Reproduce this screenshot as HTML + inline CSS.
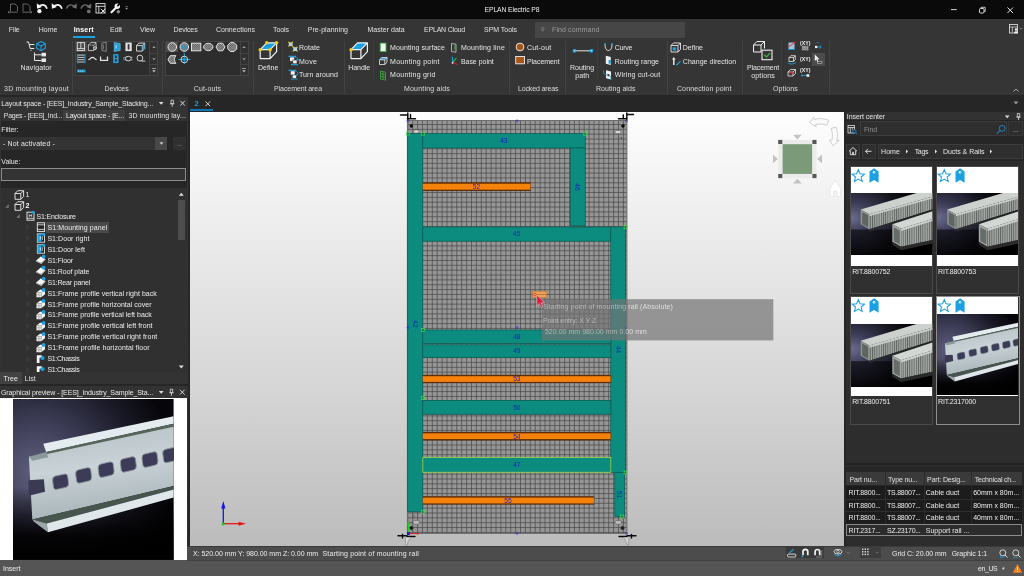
<!DOCTYPE html>
<html><head><meta charset="utf-8"><title>EPLAN Electric P8</title>
<style>
html,body{margin:0;padding:0;background:#262626;overflow:hidden;}
body{width:1024px;height:576px;position:relative;overflow:hidden;font-family:"Liberation Sans",sans-serif;}
.t{position:absolute;white-space:pre;line-height:10px;height:10px;}
.r{position:absolute;box-sizing:border-box;}
svg{overflow:visible;}
</style></head><body><div id="app" style="position:absolute;left:0;top:0;width:1024px;height:576px;overflow:hidden;will-change:transform;">
<div class="r" style="left:0.00px;top:0.00px;width:1024.00px;height:19.00px;background:#0a0a0a;"></div>
<div class="t" style="left:484.62px;top:4.94px;font-size:6.80px;color:#f0f0f0;letter-spacing:-0.114px;">EPLAN Electric P8</div>
<svg class="r" style="left:948.00px;top:4.00px;" width="70" height="12" viewBox="0 0 70 12"><path d="M3 5.600h5.800" stroke="#e8e8e8" stroke-width="0.900" fill="none"/><rect x="31.5" y="4.5" width="4.5" height="4.5" rx="1" fill="none" stroke="#e8e8e8" stroke-width="0.9"/><path d="M33 4.3v-1h4.2v4.2h-1" fill="none" stroke="#e8e8e8" stroke-width="0.8"/><path d="M59.5 3.5l5.5 5.5M65 3.5l-5.5 5.5" stroke="#e8e8e8" stroke-width="1" fill="none"/></svg>
<svg class="r" style="left:0.00px;top:0.00px;" width="135" height="19" viewBox="0 0 135 19"><g fill="none" stroke="#707070" stroke-width="0.900"><path d="M10.500 11.500v-7.500h4.500l2.500 2.500v5"/><path d="M8 12.200h9.500M9.300 11l-1.300 1.200 1.300 1.200"/></g><g fill="none" stroke="#707070" stroke-width="0.900"><path d="M23 11.500v-7.500h4.500l2.500 2.500v5"/><path d="M22.500 12.200h9.500M30.700 11l1.300 1.200-1.300 1.200"/></g><path d="M38.4 7.600c2.300-4 7.300-3.600 8.600 1.200" fill="none" stroke="#f4f4f4" stroke-width="1.600"/><path d="M36.8 3.300l0.200 5.400 5-1.700z" fill="#f4f4f4"/><circle cx="39.4" cy="11.200" r="2.100" fill="#f4f4f4"/><path d="M53.3 7.600c2.300-4 7.300-3.600 8.600 1.200" fill="none" stroke="#f4f4f4" stroke-width="1.600"/><path d="M51.7 3.300l0.200 5.400 5-1.700z" fill="#f4f4f4"/><path d="M66.5 8.600c1.300-4.600 6.300-5 8.600-1" fill="none" stroke="#6e6e6e" stroke-width="1.400"/><path d="M76.8 3.500l-0.200 5.200-4.800-1.700z" fill="#6e6e6e"/><path d="M81 8.600c1.300-4.600 6.300-5 8.600-1" fill="none" stroke="#6e6e6e" stroke-width="1.400"/><path d="M91.3 3.500l-0.200 5.200-4.800-1.700z" fill="#6e6e6e"/><circle cx="88.8" cy="11.400" r="1.900" fill="#6e6e6e"/><g fill="none" stroke="#e0e0e0" stroke-width="0.900"><rect x="96" y="3.600" width="9" height="9.400"/><path d="M96 6.300h9M98.800 6.300v6.700"/><path d="M100.800 8.800l4.400 4.400M105.200 8.800l-4.400 4.400" stroke-width="1"/></g><path d="M111.500 12.300l5-5" stroke="#f4f4f4" stroke-width="2.100" fill="none" stroke-linecap="round"/><circle cx="117.300" cy="6.200" r="2.700" fill="#f4f4f4"/><path d="M117.300 6.200l3.500-3.500" stroke="#0a0a0a" stroke-width="1.800"/><circle cx="118.300" cy="11.800" r="1.700" fill="#8a8a8a"/><path d="M125.300 8h2.600l-1.300 1.800z" fill="#a0a0a0"/><path d="M125.300 6.700h2.600" stroke="#a0a0a0" stroke-width="0.700"/></svg>
<div class="r" style="left:0.00px;top:19.00px;width:1024.00px;height:76.30px;background:#353535;"></div>
<div class="t" style="left:8.75px;top:24.87px;font-size:7.00px;color:#e0e0e0;letter-spacing:-0.095px;">File</div>
<div class="t" style="left:38.75px;top:24.87px;font-size:7.00px;color:#e0e0e0;letter-spacing:0.020px;">Home</div>
<div class="t" style="left:110.00px;top:24.87px;font-size:7.00px;color:#e0e0e0;letter-spacing:-0.040px;">Edit</div>
<div class="t" style="left:140.00px;top:24.87px;font-size:7.00px;color:#e0e0e0;letter-spacing:-0.011px;">View</div>
<div class="t" style="left:173.50px;top:24.87px;font-size:7.00px;color:#e0e0e0;letter-spacing:-0.128px;">Devices</div>
<div class="t" style="left:216.00px;top:24.87px;font-size:7.00px;color:#e0e0e0;letter-spacing:0.008px;">Connections</div>
<div class="t" style="left:273.00px;top:24.87px;font-size:7.00px;color:#e0e0e0;letter-spacing:-0.068px;">Tools</div>
<div class="t" style="left:307.75px;top:24.87px;font-size:7.00px;color:#e0e0e0;letter-spacing:0.047px;">Pre-planning</div>
<div class="t" style="left:367.50px;top:24.87px;font-size:7.00px;color:#e0e0e0;letter-spacing:0.026px;">Master data</div>
<div class="t" style="left:424.00px;top:24.87px;font-size:7.00px;color:#e0e0e0;letter-spacing:-0.199px;">EPLAN Cloud</div>
<div class="t" style="left:484.00px;top:24.87px;font-size:7.00px;color:#e0e0e0;letter-spacing:-0.036px;">SPM Tools</div>
<div class="t" style="left:73.75px;top:24.87px;font-size:7.00px;color:#ffffff;letter-spacing:0.157px;font-weight:bold;">Insert</div>
<div class="r" style="left:73.00px;top:36.20px;width:21.50px;height:1.60px;background:#1ba1e2;"></div>
<div class="r" style="left:534.50px;top:21.50px;width:150.00px;height:16.00px;background:#464646;"></div>
<div class="t" style="left:552.00px;top:24.87px;font-size:7.00px;color:#9a9a9a;letter-spacing:0.101px;">Find command</div>
<svg class="r" style="left:539.00px;top:25.00px;" width="9" height="9" viewBox="0 0 9 9"><circle cx="3.800" cy="3.800" r="1.300" fill="none" stroke="#8a8a8a" stroke-width="0.700"/><path d="M3.800 5.100v1.600" stroke="#8a8a8a" stroke-width="0.800"/></svg>
<svg class="r" style="left:1007.80px;top:22.60px;" width="16" height="12" viewBox="0 0 16 12"><rect x="1.500" y="1.500" width="8" height="8.500" fill="none" stroke="#d8d8d8" stroke-width="0.900"/><path d="M1.500 4h8M4.300 4v5.500" stroke="#d8d8d8" stroke-width="0.800"/><circle cx="8" cy="6.500" r="1.200" fill="#f0f0f0"/><path d="M6 10.200c0-2.600 4-2.600 4 0z" fill="#f0f0f0"/><path d="M11.800 5l1.200 1.200 1.200-1.200" fill="none" stroke="#aaa" stroke-width="0.700"/></svg>
<div class="r" style="left:72.00px;top:41.00px;width:1.00px;height:53.00px;background:#424242;"></div>
<div class="r" style="left:161.50px;top:41.00px;width:1.00px;height:53.00px;background:#424242;"></div>
<div class="r" style="left:253.00px;top:41.00px;width:1.00px;height:53.00px;background:#424242;"></div>
<div class="r" style="left:343.50px;top:41.00px;width:1.00px;height:53.00px;background:#424242;"></div>
<div class="r" style="left:508.50px;top:41.00px;width:1.00px;height:53.00px;background:#424242;"></div>
<div class="r" style="left:565.00px;top:41.00px;width:1.00px;height:53.00px;background:#424242;"></div>
<div class="r" style="left:667.00px;top:41.00px;width:1.00px;height:53.00px;background:#424242;"></div>
<div class="r" style="left:742.00px;top:41.00px;width:1.00px;height:53.00px;background:#424242;"></div>
<div class="r" style="left:828.50px;top:41.00px;width:1.00px;height:53.00px;background:#424242;"></div>
<div class="t" style="left:4.00px;top:83.87px;font-size:7.00px;color:#dcdcdc;letter-spacing:0.261px;">3D mounting layout</div>
<div class="t" style="left:104.50px;top:83.87px;font-size:7.00px;color:#dcdcdc;letter-spacing:-0.128px;">Devices</div>
<div class="t" style="left:193.75px;top:83.87px;font-size:7.00px;color:#dcdcdc;letter-spacing:0.131px;">Cut-outs</div>
<div class="t" style="left:274.00px;top:83.87px;font-size:7.00px;color:#dcdcdc;letter-spacing:-0.073px;">Placement area</div>
<div class="t" style="left:404.00px;top:83.87px;font-size:7.00px;color:#dcdcdc;letter-spacing:0.186px;">Mounting aids</div>
<div class="t" style="left:517.95px;top:83.87px;font-size:7.00px;color:#dcdcdc;letter-spacing:-0.127px;">Locked areas</div>
<div class="t" style="left:595.95px;top:83.87px;font-size:7.00px;color:#dcdcdc;letter-spacing:0.049px;">Routing aids</div>
<div class="t" style="left:676.95px;top:83.87px;font-size:7.00px;color:#dcdcdc;letter-spacing:0.123px;">Connection point</div>
<div class="t" style="left:773.00px;top:83.87px;font-size:7.00px;color:#dcdcdc;letter-spacing:0.125px;">Options</div>
<div class="t" style="left:20.55px;top:62.87px;font-size:7.00px;color:#e6e6e6;letter-spacing:0.149px;">Navigator</div>
<svg class="r" style="left:24.00px;top:39.00px;" width="26" height="24" viewBox="0 0 26 24"><path d="M2.500 3h2l1.700 6.500h4" fill="none" stroke="#e8e8e8" stroke-width="1"/><path d="M5.300 5.500h5" stroke="#e8e8e8" stroke-width="1"/><circle cx="7" cy="11.300" r="0.600" fill="#e8e8e8"/><g fill="none" stroke="#1ba1e2" stroke-width="1.100"><path d="M17 2.500l4.300 2.200v4.600l-4.300 2.400-4.300-2.400v-4.600z"/><path d="M12.700 4.700l4.300 2.300 4.300-2.300M17 7v4.700"/></g><g fill="none" stroke="#e8e8e8" stroke-width="1"><path d="M10.500 13.500v8h7M10.500 15.800h7"/></g><rect x="17.500" y="13.800" width="4.500" height="3.600" fill="#e8e8e8"/><rect x="17.500" y="19.400" width="4.500" height="3.600" fill="#e8e8e8"/></svg>
<div class="r" style="left:75.20px;top:41.20px;width:82.60px;height:35.20px;background:#2d2d2d;border:1px solid #444444;"></div>
<div class="r" style="left:149.40px;top:41.20px;width:8.40px;height:35.20px;background:#313131;border:1px solid #444444;"></div>
<div class="r" style="left:149.40px;top:52.80px;width:8.40px;height:1.00px;background:#444444;"></div>
<div class="r" style="left:149.40px;top:64.40px;width:8.40px;height:1.00px;background:#444444;"></div>
<svg class="r" style="left:150.60px;top:41.00px;" width="6" height="36" viewBox="0 0 6 36"><path d="M1.400 7h3.200l-1.600-2z" fill="#a0a0a0"/><path d="M1.400 17.300h3.200l-1.600 2z" fill="#a0a0a0"/><path d="M1.200 27.500h3.600" stroke="#c0c0c0" stroke-width="0.800"/><path d="M1.200 29.200h3.600l-1.800 2.200z" fill="#c0c0c0"/></svg>
<div class="r" style="left:75.90px;top:41.80px;width:10.70px;height:10.40px;background:#4c4c4c;"></div>
<div class="r" style="left:165.40px;top:41.20px;width:83.20px;height:35.20px;background:#2d2d2d;border:1px solid #444444;"></div>
<div class="r" style="left:240.00px;top:41.20px;width:8.60px;height:35.20px;background:#313131;border:1px solid #444444;"></div>
<div class="r" style="left:240.00px;top:52.80px;width:8.60px;height:1.00px;background:#444444;"></div>
<div class="r" style="left:240.00px;top:64.40px;width:8.60px;height:1.00px;background:#444444;"></div>
<svg class="r" style="left:241.30px;top:41.00px;" width="6" height="36" viewBox="0 0 6 36"><path d="M1.400 7h3.200l-1.600-2z" fill="#a0a0a0"/><path d="M1.400 17.300h3.200l-1.600 2z" fill="#a0a0a0"/><path d="M1.200 27.500h3.600" stroke="#c0c0c0" stroke-width="0.800"/><path d="M1.200 29.200h3.600l-1.800 2.200z" fill="#c0c0c0"/></svg>
<div class="r" style="left:166.10px;top:41.80px;width:11.60px;height:10.40px;background:#4c4c4c;"></div>
<svg class="r" style="left:75.50px;top:41.00px;" width="75" height="36" viewBox="0 0 75 36"><g transform="translate(-0.630,-0.900) scale(0.963,1)"><g fill="none" stroke="#e4e4e4" stroke-width="0.9"><rect x="2" y="2.500" width="7.500" height="8"/><path d="M5.700 2.500v6M2 8.500h7.500"/></g><g fill="none" stroke="#e4e4e4" stroke-width="0.8"><path d="M13.500 5l2.500-2.500h5.500v5.500l-2.500 2.500h-5.500z"/><path d="M13.500 5h5.500v5.500M19 5l2.500-2.500" stroke-dasharray="1.200 0.600"/><circle cx="20.500" cy="8" r="1.500"/></g><g fill="none" stroke="#9a9a9a" stroke-width="0.8"><path d="M27.500 3l4.500-0.800v9l-4.500-0.800z"/><path d="M29 4.500v4.500"/></g><path d="M40.300 2.300l6.300 1.100v7l-6.300 1.100z" fill="#1ba1e2"/><path d="M42.300 5v3.500" stroke="#fff" stroke-width="0.700"/><path d="M40.300 2.300l6.300 1.100v7l-6.300 1.100z" fill="none" stroke="#bfe3f7" stroke-width="0.400"/><rect x="52" y="2.500" width="6.500" height="8.500" fill="#e4e4e4"/><rect x="54.300" y="4" width="1.900" height="5.500" fill="#333"/><g fill="none" stroke="#e4e4e4" stroke-width="0.9"><path d="M63.500 5.500l2.500-2.500h6v5.500l-2.500 2.500h-6z"/><path d="M63.500 5.500h6v5.500M69.500 5.500l2.500-2.500"/></g><path d="M69.800 5.700l2-2v5l-2 2z" fill="#1ba1e2"/><g fill="none" stroke="#e4e4e4" stroke-width="0.9"><path d="M2.500 15h7M2.500 17.300h7M2.500 19.600h7M2.500 21.900h7"/></g><path d="M2 13.800v9.500M10 13.800v9.500" stroke="#1ba1e2" stroke-width="1"/><path d="M13.500 19.500c2.500 0 2-2.300 4.300-2.300s1.800 2.300 4.300 2.300" fill="none" stroke="#e4e4e4" stroke-width="1.300"/><path d="M25.500 16.500v4.500h8.500v-4.500h-1.300v3.200h-5.900v-3.200z" fill="#e4e4e4"/><rect x="39.300" y="14" width="5.500" height="9" fill="#1ba1e2"/><rect x="41.100" y="15.500" width="1.900" height="6" fill="#2a2a2a"/><path d="M41.100 18.500h1.900" stroke="#e4e4e4" stroke-width="0.600"/><g fill="none" stroke="#e4e4e4" stroke-width="0.9"><ellipse cx="55" cy="18.500" rx="3" ry="2.300"/><path d="M51 17.200h1.200M51 19.800h1.200M58 17.200h1.200M58 19.800h1.200"/></g><path d="M50.300 17v3" stroke="#1ba1e2" stroke-width="0.900"/><g fill="none" stroke="#e4e4e4" stroke-width="0.9"><circle cx="67" cy="18" r="3"/><path d="M68.500 21h4"/></g><rect x="1.800" y="29.500" width="8.700" height="2.800" fill="#1ba1e2"/><path d="M3 31h1M5 31h1M7 31h1" stroke="#fff" stroke-width="0.600"/></g></svg>
<svg class="r" style="left:165.50px;top:41.00px;" width="75" height="36" viewBox="0 0 75 36"><g transform="translate(0,-0.500)"><defs><pattern id="hx" width="1.600" height="1.600" patternUnits="userSpaceOnUse" patternTransform="rotate(45)"><rect width="1.600" height="1.600" fill="#555"/><path d="M0 0h1.600M0 0v1.600" stroke="#ddd" stroke-width="0.500"/></pattern></defs><circle cx="6.300" cy="6.500" r="4.300" fill="url(#hx)" stroke="#e4e4e4" stroke-width="1"/><circle cx="18.300" cy="6.500" r="4.300" fill="url(#hx)" stroke="#e4e4e4" stroke-width="1"/><circle cx="18.300" cy="6.500" r="2" fill="none" stroke="#1ba1e2" stroke-width="1"/><rect x="25.500" y="2.700" width="9.300" height="7.600" fill="url(#hx)" stroke="#e4e4e4" stroke-width="1"/><ellipse cx="42.300" cy="6.500" rx="4.700" ry="3.700" fill="url(#hx)" stroke="#e4e4e4" stroke-width="1"/><path d="M50 6.500l2.300-3.800h4.400l2.300 3.800-2.300 3.800h-4.400z" fill="url(#hx)" stroke="#e4e4e4" stroke-width="1"/><path d="M61.800 4.700l2.600-2.600h3.700l2.600 2.600v3.700l-2.600 2.600h-3.700l-2.600-2.600z" fill="url(#hx)" stroke="#e4e4e4" stroke-width="1"/><path d="M2 19l2.300-3.800h5.700c-2 2.200-2 5.400 0 7.600h-5.700z" fill="url(#hx)" stroke="#e4e4e4" stroke-width="1"/><g fill="none" stroke="#1ba1e2" stroke-width="1"><path d="M12.300 19h12M18.300 12.500v11"/><circle cx="18.300" cy="19" r="1.200" fill="#1ba1e2"/></g><circle cx="18.300" cy="19" r="3.300" fill="none" stroke="#e4e4e4" stroke-width="0.900"/></g></svg>
<svg class="r" style="left:254.00px;top:36.00px;" width="40" height="30" viewBox="0 0 40 30"><path d="M6.2 13.7l6.5 -6.9h9.9l-6.5 6.9z" fill="#1ba1e2"/><g fill="none" stroke="#f2f2f2" stroke-width="1.200" stroke-linejoin="round"><rect x="6.2" y="13.7" width="9.9" height="8.9"/><path d="M6.2 13.7l6.5 -6.9h9.9v8.9l-6.5 6.9M16.1 13.7l6.5 -6.9"/></g><circle cx="6.2" cy="13.7" r="1.700" fill="#f2c811"/><circle cx="16.1" cy="13.7" r="1.700" fill="#f2c811"/><circle cx="12.7" cy="6.8" r="1.700" fill="#f2c811"/><circle cx="22.6" cy="6.8" r="1.700" fill="#f2c811"/></svg>
<div class="t" style="left:257.95px;top:62.87px;font-size:7.00px;color:#e6e6e6;letter-spacing:0.044px;">Define</div>
<div class="r" style="left:282.00px;top:42.00px;width:1.00px;height:37.00px;background:#3e3e3e;"></div>
<svg class="r" style="left:287.50px;top:42.20px;" width="11" height="11" viewBox="0 0 11 11"><g stroke="#1ba1e2" stroke-width="0.900" fill="none"><path d="M2.500 2.500l5 5M5 7.600h2.600v-2.600"/></g><rect x="0.800" y="0.300" width="3.800" height="3.800" fill="#b8cfe0"/><rect x="5.300" y="5.200" width="3.800" height="3.800" fill="#b8cfe0"/><g fill="#f2c811"><circle cx="0.800" cy="0.300" r="0.700"/><circle cx="4.600" cy="0.300" r="0.700"/><circle cx="0.800" cy="4.100" r="0.700"/><circle cx="4.600" cy="4.100" r="0.700"/><circle cx="5.300" cy="5.200" r="0.700"/><circle cx="9.100" cy="5.200" r="0.700"/><circle cx="5.300" cy="9" r="0.700"/><circle cx="9.100" cy="9" r="0.700"/></g></svg>
<svg class="r" style="left:287.50px;top:55.20px;" width="11" height="11" viewBox="0 0 11 11"><path d="M0.500 1.300h7.500M3 9.700h7" stroke="#1ba1e2" stroke-width="1.200"/><rect x="2" y="2.300" width="4.200" height="3.800" fill="#f0f0f0"/><rect x="4.800" y="5" width="4.200" height="3.800" fill="#f0f0f0" stroke="#353535" stroke-width="0.600"/><path d="M7 2.200c2.500 0 3.200 1.500 2.800 3.200M8.800 4.200l1 1.400 1-1.300" stroke="#1ba1e2" stroke-width="0.900" fill="none"/></svg>
<svg class="r" style="left:287.50px;top:68.80px;" width="11" height="11" viewBox="0 0 11 11"><path d="M0.500 1.300h7.500M3 10h6.500" stroke="#1ba1e2" stroke-width="1.200"/><rect x="2.800" y="2.200" width="4" height="3.600" fill="#f0f0f0"/><rect x="4.300" y="6" width="4" height="3.300" fill="#f0f0f0" stroke="#353535" stroke-width="0.500"/><path d="M7.500 2.300c2.500 0.300 3 2.500 1.500 4M8 6l1 0.500 0.300-1.200" stroke="#1ba1e2" stroke-width="0.900" fill="none"/></svg>
<div class="t" style="left:299.00px;top:42.87px;font-size:7.00px;color:#e6e6e6;letter-spacing:0.063px;">Rotate</div>
<div class="t" style="left:299.00px;top:56.87px;font-size:7.00px;color:#e6e6e6;letter-spacing:0.221px;">Move</div>
<div class="t" style="left:299.00px;top:69.87px;font-size:7.00px;color:#e6e6e6;letter-spacing:0.103px;">Turn around</div>
<svg class="r" style="left:344.00px;top:36.00px;" width="40" height="30" viewBox="0 0 40 30"><path d="M7 13.7l6.5 -6.9h9.9l-6.5 6.9z" fill="#1ba1e2"/><g fill="none" stroke="#f2f2f2" stroke-width="1.200" stroke-linejoin="round"><rect x="7" y="13.7" width="9.9" height="8.9"/><path d="M7 13.7l6.5 -6.9h9.9v8.9l-6.5 6.9M16.9 13.7l6.5 -6.9"/></g><circle cx="7" cy="13.7" r="1.700" fill="#f2c811"/></svg>
<div class="t" style="left:348.20px;top:62.87px;font-size:7.00px;color:#e6e6e6;letter-spacing:-0.030px;">Handle</div>
<div class="r" style="left:373.00px;top:42.00px;width:1.00px;height:37.00px;background:#3e3e3e;"></div>
<svg class="r" style="left:379.00px;top:41.50px;" width="9" height="11" viewBox="0 0 9 11"><rect x="1.200" y="1.100" width="5.800" height="8.500" fill="#f4f4f4" stroke="#3fae3f" stroke-width="0.900"/></svg>
<svg class="r" style="left:378.00px;top:55.50px;" width="11" height="11" viewBox="0 0 11 11"><path d="M1.500 3.800l2.200-2.300h5.300l-2.200 2.300z" fill="#1ba1e2"/><g fill="none" stroke="#eee" stroke-width="0.800"><path d="M1.500 3.800h5.300v4.700h-5.300zM1.500 3.800l2.200-2.300h5.300v4.500l-2.200 2.500M6.800 3.800l2.200-2.300"/></g><circle cx="1.300" cy="3.800" r="0.700" fill="#3fae3f"/></svg>
<svg class="r" style="left:379.00px;top:68.50px;" width="9" height="12" viewBox="0 0 9 12"><g fill="none" stroke="#3fae3f" stroke-width="0.800"><path d="M1.500 2l5 1.200v8l-5-1.200zM1.500 4.700l5 1.200M1.500 7.300l5 1.200M4 2.600v8"/></g></svg>
<svg class="r" style="left:450.00px;top:41.50px;" width="9" height="11" viewBox="0 0 9 11"><path d="M1.500 1.500l4.500 0.700v8l-4.500-0.700z" fill="none" stroke="#bbb" stroke-width="0.900"/><path d="M4.800 3v5" stroke="#3fae3f" stroke-width="1"/></svg>
<svg class="r" style="left:450.00px;top:55.00px;" width="10" height="11" viewBox="0 0 10 11"><path d="M2.500 7.800l0-6" stroke="#1ba1e2" stroke-width="1.100"/><path d="M2.500 7.800l4-5" stroke="#3fae3f" stroke-width="1.100"/><path d="M2.500 7.800l5 1.600" stroke="#e02020" stroke-width="1.100"/><circle cx="2.500" cy="7.800" r="0.900" fill="#eee"/></svg>
<div class="t" style="left:390.10px;top:42.87px;font-size:7.00px;color:#e6e6e6;letter-spacing:0.069px;">Mounting surface</div>
<div class="t" style="left:390.10px;top:56.87px;font-size:7.00px;color:#e6e6e6;letter-spacing:0.263px;">Mounting point</div>
<div class="t" style="left:390.10px;top:69.87px;font-size:7.00px;color:#e6e6e6;letter-spacing:0.238px;">Mounting grid</div>
<div class="t" style="left:460.90px;top:42.87px;font-size:7.00px;color:#e6e6e6;letter-spacing:0.190px;">Mounting line</div>
<div class="t" style="left:460.90px;top:56.87px;font-size:7.00px;color:#e6e6e6;letter-spacing:-0.028px;">Base point</div>
<svg class="r" style="left:514.00px;top:41.00px;" width="12" height="25" viewBox="0 0 12 25"><defs><pattern id="ho" width="1.500" height="1.500" patternUnits="userSpaceOnUse" patternTransform="rotate(45)"><rect width="1.500" height="1.500" fill="#c8691e"/><path d="M0 0h1.500M0 0v1.500" stroke="#5a2a08" stroke-width="0.500"/></pattern></defs><circle cx="6" cy="6" r="3.900" fill="url(#ho)" stroke="#eee" stroke-width="0.900"/><rect x="1.700" y="15.500" width="8.800" height="7.300" fill="url(#ho)" stroke="#eee" stroke-width="0.900"/></svg>
<div class="t" style="left:527.00px;top:42.87px;font-size:7.00px;color:#e6e6e6;letter-spacing:0.207px;">Cut-out</div>
<div class="t" style="left:527.00px;top:56.87px;font-size:7.00px;color:#e6e6e6;letter-spacing:-0.052px;">Placement</div>
<svg class="r" style="left:570.00px;top:46.00px;" width="26" height="10" viewBox="0 0 26 10"><path d="M4.500 4.800h17" stroke="#d8d8d8" stroke-width="1.100"/><rect x="2.800" y="3.100" width="3.400" height="3.400" fill="#1ba1e2"/><rect x="19.800" y="3.100" width="3.400" height="3.400" fill="#1ba1e2"/><rect x="3.900" y="4.200" width="1.200" height="1.200" fill="#cfe8f8"/><rect x="20.900" y="4.200" width="1.200" height="1.200" fill="#cfe8f8"/></svg>
<div class="t" style="left:570.00px;top:62.87px;font-size:7.00px;color:#e6e6e6;letter-spacing:-0.018px;">Routing</div>
<div class="t" style="left:575.20px;top:70.87px;font-size:7.00px;color:#e6e6e6;letter-spacing:0.094px;">path</div>
<div class="r" style="left:597.40px;top:42.00px;width:1.00px;height:37.00px;background:#3e3e3e;"></div>
<svg class="r" style="left:602.50px;top:41.50px;" width="11" height="11" viewBox="0 0 11 11"><path d="M2 2c0 4 1 6.500 3.500 6.500s3.500-2.500 3.500-6.500" fill="none" stroke="#e8e8e8" stroke-width="1"/><circle cx="2" cy="2" r="0.900" fill="#1ba1e2"/><circle cx="9" cy="2" r="0.900" fill="#1ba1e2"/></svg>
<svg class="r" style="left:603.50px;top:55.00px;" width="9" height="11" viewBox="0 0 9 11"><path d="M1.800 0.800l5 1.300v8l-5-1.300z" fill="#f0f0f0"/><rect x="4.600" y="5" width="2.200" height="3.700" fill="#1ba1e2"/></svg>
<svg class="r" style="left:602.00px;top:68.50px;" width="12" height="12" viewBox="0 0 12 12"><path d="M4 1.200l5 1.300v8l-5-1.300z" fill="#f0f0f0"/><path d="M1.500 1.500c0 4 1.500 4 4 4.300s3.500 1.500 3.500 5" fill="none" stroke="#1ba1e2" stroke-width="0.900"/><rect x="5.500" y="5.200" width="1.800" height="2" fill="#353535"/></svg>
<div class="t" style="left:614.70px;top:42.87px;font-size:7.00px;color:#e6e6e6;letter-spacing:-0.234px;">Curve</div>
<div class="t" style="left:614.70px;top:56.87px;font-size:7.00px;color:#e6e6e6;letter-spacing:0.025px;">Routing range</div>
<div class="t" style="left:614.70px;top:69.87px;font-size:7.00px;color:#e6e6e6;letter-spacing:0.173px;">Wiring cut-out</div>
<svg class="r" style="left:670.00px;top:41.50px;" width="12" height="11" viewBox="0 0 12 11"><g fill="none" stroke="#e8e8e8" stroke-width="0.900"><path d="M1 3.500h7v6.500h-7zM1 3.500l2.500-2.500h7v6.500l-2.500 2.500M8 3.500l2.500-2.500"/></g><rect x="2.700" y="5.300" width="3.500" height="3.200" fill="#1ba1e2"/></svg>
<svg class="r" style="left:671.00px;top:55.50px;" width="11" height="10" viewBox="0 0 11 10"><path d="M2.800 1l1.800 2.500h-1.100v5.500h-1.400v-5.500h-1.100z" fill="#f0f0f0"/><path d="M5.200 8.500l3.800-3.800 0.900 0.900-3.800 3.800h-0.900z" fill="#1ba1e2"/></svg>
<div class="t" style="left:682.80px;top:42.87px;font-size:7.00px;color:#e6e6e6;letter-spacing:-0.006px;">Define</div>
<div class="t" style="left:682.80px;top:56.87px;font-size:7.00px;color:#e6e6e6;letter-spacing:0.030px;">Change direction</div>
<svg class="r" style="left:752.00px;top:39.80px;" width="22" height="21" viewBox="0 0 22 21"><g fill="none" stroke="#f0f0f0" stroke-width="1"><path d="M1.500 5h7.500v7h-7.500zM1.500 5l3.500-3.500h7.500l-3.500 3.500M12.500 1.500v7"/></g><rect x="10" y="10.200" width="10" height="9.500" fill="#353535" stroke="#f0f0f0" stroke-width="1.100"/><path d="M12.300 14.800l2.200 2.200 3.500-4" fill="none" stroke="#3fae3f" stroke-width="1.300"/></svg>
<div class="t" style="left:747.00px;top:62.87px;font-size:7.00px;color:#e6e6e6;letter-spacing:-0.119px;">Placement</div>
<div class="t" style="left:751.20px;top:70.87px;font-size:7.00px;color:#e6e6e6;letter-spacing:0.176px;">options</div>
<div class="r" style="left:781.00px;top:42.00px;width:1.00px;height:37.00px;background:#3e3e3e;"></div>
<div class="r" style="left:812.20px;top:53.00px;width:12.80px;height:13.40px;background:#4c4c4c;"></div>
<svg class="r" style="left:786.20px;top:40.00px;" width="40" height="40" viewBox="0 0 40 40"><rect x="2.500" y="2.500" width="6" height="6.500" fill="#9ec3dc"/><path d="M1.500 7.500l7.500-5" stroke="#e02020" stroke-width="0.800"/><circle cx="8.800" cy="2.300" r="0.900" fill="#e02020"/><path d="M2 9.500h7" stroke="#1ba1e2" stroke-width="0.800"/><g fill="none" stroke="#e8e8e8" stroke-width="0.800"><path d="M3 17.500h4.500v4h-4.500zM3 17.500l1.800-1.800h4.500v4l-1.800 1.800M7.500 17.500l1.800-1.800"/></g><path d="M1.500 22.500c2 2 6 2 8.500 0" fill="none" stroke="#1ba1e2" stroke-width="0.900"/><g fill="none" stroke="#e8e8e8" stroke-width="0.800"><path d="M2 32h5v4h-5zM2 32l2.500-2.500h5v4l-2.500 2.500M7 32l2.500-2.500"/></g><circle cx="5.500" cy="32.800" r="1.300" fill="#e02020"/><text x="19.2" y="5.3" font-size="5.200" font-family="Liberation Sans, sans-serif" fill="#eee" text-anchor="middle" font-weight="bold">(XY)</text><g stroke="#ddd" stroke-width="0.700" fill="none"><circle cx="17" cy="7" r="0.800"/><circle cx="19.200" cy="7" r="0.800"/><circle cx="21.400" cy="7" r="0.800"/><circle cx="17" cy="9.300" r="0.800"/><circle cx="19.200" cy="9.300" r="0.800"/><circle cx="21.400" cy="9.300" r="0.800"/></g><text x="19.2" y="21" font-size="5.200" font-family="Liberation Sans, sans-serif" fill="#eee" text-anchor="middle" font-weight="bold">(XY)</text><text x="19.2" y="32.3" font-size="5.200" font-family="Liberation Sans, sans-serif" fill="#eee" text-anchor="middle" font-weight="bold">(XY)</text><path d="M15 35.500h6" stroke="#1ba1e2" stroke-width="0.900"/><circle cx="16" cy="35.500" r="0.900" fill="#1ba1e2"/><rect x="20.500" y="34.200" width="2.800" height="2.600" fill="#eee"/><path d="M29.500 7h5.500M33.500 5.300l1.800 1.700-1.800 1.700" fill="none" stroke="#1ba1e2" stroke-width="0.900"/><rect x="29" y="5.800" width="2.300" height="2.300" fill="#eee"/><path d="M29.500 3.500c1-1.500 3-1.500 4 0" fill="none" stroke="#1ba1e2" stroke-width="0.700" stroke-dasharray="1 0.600"/><path d="M28.800 14.500v6.500l1.600-1.400 1.100 2.400 1-0.500-1.100-2.300h2.100z" fill="#f4f4f4"/><rect x="31.500" y="21.300" width="4.500" height="2.200" fill="none" stroke="#ccc" stroke-width="0.500"/></svg>
<svg class="r" style="left:1012.00px;top:87.00px;" width="8" height="6" viewBox="0 0 8 6"><path d="M1.500 4.500l2.500-2.500 2.500 2.500" fill="none" stroke="#aaa" stroke-width="0.900"/></svg>
<div class="r" style="left:0.00px;top:95.30px;width:1024.00px;height:16.70px;background:#262626;"></div>
<div class="r" style="left:0.00px;top:96.60px;width:188.00px;height:465.40px;background:#333333;"></div>
<div class="t" style="left:1.30px;top:98.87px;font-size:7.00px;color:#e6e6e6;letter-spacing:-0.147px;">Layout space - [EES]_Industry_Sample_Stacking...</div>
<svg class="r" style="left:156.00px;top:98.00px;" width="32" height="11" viewBox="0 0 32 11"><path d="M2.800 4h4.800l-2.400 2.800z" fill="#ddd"/><g fill="none" stroke="#ddd" stroke-width="0.800"><path d="M15 2.200h2.400v3.500h-2.400zM14 5.800h4.400M16.200 5.800v3"/></g><path d="M24.300 2.800l4.600 4.800M28.900 2.800l-4.600 4.800" stroke="#e8e8e8" stroke-width="0.900"/></svg>
<div class="r" style="left:62.50px;top:109.50px;width:62.50px;height:11.30px;background:#3e3e3e;"></div>
<div class="t" style="left:3.80px;top:110.87px;font-size:7.00px;color:#e0e0e0;letter-spacing:-0.271px;">Pages - [EES]_Ind...</div>
<div class="t" style="left:66.00px;top:110.87px;font-size:7.00px;color:#f0f0f0;letter-spacing:-0.115px;">Layout space - [E...</div>
<div class="t" style="left:128.50px;top:110.87px;font-size:7.00px;color:#e0e0e0;letter-spacing:0.089px;">3D mounting lay...</div>
<div class="r" style="left:1.30px;top:120.80px;width:186.00px;height:67.00px;background:#262626;"></div>
<div class="t" style="left:1.30px;top:124.87px;font-size:7.00px;color:#e6e6e6;letter-spacing:-0.043px;">Filter:</div>
<div class="r" style="left:1.30px;top:136.50px;width:165.50px;height:13.20px;background:#333333;"></div>
<div class="r" style="left:155.40px;top:136.50px;width:11.40px;height:13.20px;background:#484848;"></div>
<svg class="r" style="left:157.50px;top:140.50px;" width="7" height="5" viewBox="0 0 7 5"><path d="M1.500 1.200h4l-2 2.500z" fill="#ccc"/></svg>
<div class="r" style="left:172.50px;top:136.50px;width:13.50px;height:13.20px;background:#303030;"></div>
<div class="t" style="left:176.49px;top:139.05px;font-size:6.50px;color:#888;">...</div>
<div class="t" style="left:3.00px;top:138.87px;font-size:7.00px;color:#e6e6e6;letter-spacing:0.153px;">- Not activated -</div>
<div class="t" style="left:1.30px;top:156.87px;font-size:7.00px;color:#e6e6e6;letter-spacing:-0.055px;">Value:</div>
<div class="r" style="left:1.30px;top:168.10px;width:184.50px;height:12.70px;background:#333333;border:1px solid #8c8c8c;"></div>
<div class="r" style="left:1.30px;top:188.00px;width:186.00px;height:183.50px;background:#303030;"></div>
<div class="r" style="left:46.20px;top:222.12px;width:62.80px;height:10.60px;background:#4a4a4a;"></div>
<div class="r" style="left:176.80px;top:188.00px;width:9.20px;height:183.50px;background:#303030;"></div>
<div class="r" style="left:177.80px;top:200.00px;width:7.20px;height:40.00px;background:#4d4d4d;"></div>
<svg class="r" style="left:177.30px;top:190.00px;" width="9" height="8" viewBox="0 0 9 8"><path d="M1.800 5.800h5l-2.500-3z" fill="#ddd"/></svg>
<svg class="r" style="left:177.30px;top:362.50px;" width="9" height="8" viewBox="0 0 9 8"><path d="M1.800 2.500h5l-2.500 3z" fill="#ddd"/></svg>
<svg class="r" style="left:13.50px;top:189.60px;" width="11" height="10" viewBox="0 0 11 10"><g fill="none" stroke="#f0f0f0" stroke-width="0.900" stroke-linejoin="round"><path d="M1 3.500h5.800v5.800h-5.800zM1 3.500l2.800-2.800h5.800v5.800l-2.800 2.800M6.800 3.500l2.800-2.800"/></g></svg>
<div class="t" style="left:25.50px;top:189.87px;font-size:7.00px;color:#ececec;">1</div>
<svg class="r" style="left:13.50px;top:200.54px;" width="11" height="10" viewBox="0 0 11 10"><g fill="none" stroke="#f0f0f0" stroke-width="0.900" stroke-linejoin="round"><path d="M1 3.500h5.800v5.800h-5.800zM1 3.500l2.800-2.800h5.800v5.800l-2.800 2.800M6.800 3.500l2.800-2.800"/></g></svg>
<div class="t" style="left:25.50px;top:200.87px;font-size:7.00px;color:#fff;font-weight:bold;">2</div>
<svg class="r" style="left:3.50px;top:202.54px;" width="6" height="6" viewBox="0 0 6 6"><path d="M4.800 1.200v3.600h-3.600z" fill="#777"/></svg>
<svg class="r" style="left:14.50px;top:213.48px;" width="6" height="6" viewBox="0 0 6 6"><path d="M4.800 1.200v3.600h-3.600z" fill="#777"/></svg>
<svg class="r" style="left:25.50px;top:211.48px;" width="10" height="10" viewBox="0 0 10 10"><rect x="1" y="1.200" width="7" height="8" fill="none" stroke="#f0f0f0" stroke-width="0.900"/><path d="M1 7.300h7" stroke="#f0f0f0" stroke-width="0.800"/><path d="M3.300 3v3M5.600 3v3M3.300 4.500h2.300" stroke="#e0e0e0" stroke-width="0.700"/><circle cx="7.200" cy="1.300" r="1.500" fill="#1ba1e2"/></svg>
<div class="t" style="left:36.50px;top:211.87px;font-size:7.00px;color:#ececec;letter-spacing:-0.194px;">S1:Enclosure</div>
<div class="r" style="left:0;top:188px;width:176.800px;height:183.500px;overflow:hidden;">
<div class="r" style="left:0;top:-188px;width:190px;height:576px;">
<svg class="r" style="left:25.40px;top:224.42px;" width="6" height="6" viewBox="0 0 6 6"><path d="M1.800 0.800l2.600 2.200-2.600 2.200z" fill="none" stroke="#4a4a4a" stroke-width="0.600"/></svg>
<svg class="r" style="left:36.00px;top:222.42px;" width="10" height="10" viewBox="0 0 10 10"><rect x="1.300" y="0.800" width="7.300" height="8.600" fill="#262626" stroke="#f0f0f0" stroke-width="0.900"/><path d="M1.300 2.800h7.300M1.300 7.400h7.300" stroke="#f0f0f0" stroke-width="0.800"/></svg>
<div class="t" style="left:47.40px;top:222.87px;font-size:7.00px;color:#ececec;letter-spacing:0.102px;">S1:Mounting panel</div>
<svg class="r" style="left:25.40px;top:235.36px;" width="6" height="6" viewBox="0 0 6 6"><path d="M1.800 0.800l2.600 2.200-2.600 2.200z" fill="none" stroke="#4a4a4a" stroke-width="0.600"/></svg>
<svg class="r" style="left:36.00px;top:233.36px;" width="10" height="10" viewBox="0 0 10 10"><rect x="1.300" y="0.800" width="7.300" height="8.400" fill="#262626" stroke="#f0f0f0" stroke-width="0.800"/><rect x="1.700" y="1.200" width="3.800" height="7.600" fill="#1ba1e2"/><path d="M4.300 3.500v3" stroke="#fff" stroke-width="0.800"/><path d="M6.500 3v4" stroke="#ddd" stroke-width="0.600"/><circle cx="7.700" cy="1.300" r="1.600" fill="#1ba1e2"/></svg>
<div class="t" style="left:47.40px;top:233.87px;font-size:7.00px;color:#ececec;letter-spacing:0.059px;">S1:Door right</div>
<svg class="r" style="left:25.40px;top:246.30px;" width="6" height="6" viewBox="0 0 6 6"><path d="M1.800 0.800l2.600 2.200-2.600 2.200z" fill="none" stroke="#4a4a4a" stroke-width="0.600"/></svg>
<svg class="r" style="left:36.00px;top:244.30px;" width="10" height="10" viewBox="0 0 10 10"><rect x="1.300" y="0.800" width="7.300" height="8.400" fill="#262626" stroke="#f0f0f0" stroke-width="0.800"/><rect x="1.700" y="1.200" width="3.800" height="7.600" fill="#1ba1e2"/><path d="M4.300 3.500v3" stroke="#fff" stroke-width="0.800"/><path d="M6.500 3v4" stroke="#ddd" stroke-width="0.600"/><circle cx="7.700" cy="1.300" r="1.600" fill="#1ba1e2"/></svg>
<div class="t" style="left:47.40px;top:244.87px;font-size:7.00px;color:#ececec;letter-spacing:0.045px;">S1:Door left</div>
<svg class="r" style="left:25.40px;top:257.24px;" width="6" height="6" viewBox="0 0 6 6"><path d="M1.800 0.800l2.600 2.200-2.600 2.200z" fill="none" stroke="#4a4a4a" stroke-width="0.600"/></svg>
<svg class="r" style="left:36.00px;top:255.24px;" width="11" height="10" viewBox="0 0 11 10"><path d="M0 5.700l4.700-4.200 4.700 2.400-4.100 4.100z" fill="#f6f6f6"/><path d="M0 5.700l5.300 2.300 4.100-4.100v0.900l-4.100 4.100-5.300-2.300z" fill="#c8c8c8"/><circle cx="7.600" cy="1.600" r="1.900" fill="#1ba1e2"/></svg>
<div class="t" style="left:47.40px;top:255.87px;font-size:7.00px;color:#ececec;letter-spacing:-0.119px;">S1:Floor</div>
<svg class="r" style="left:25.40px;top:268.18px;" width="6" height="6" viewBox="0 0 6 6"><path d="M1.800 0.800l2.600 2.200-2.600 2.200z" fill="none" stroke="#4a4a4a" stroke-width="0.600"/></svg>
<svg class="r" style="left:36.00px;top:266.18px;" width="11" height="10" viewBox="0 0 11 10"><path d="M0 5.700l4.700-4.200 4.700 2.400-4.100 4.100z" fill="#f6f6f6"/><path d="M0 5.700l5.300 2.300 4.100-4.100v0.900l-4.100 4.100-5.300-2.300z" fill="#c8c8c8"/><circle cx="7.600" cy="1.600" r="1.900" fill="#1ba1e2"/></svg>
<div class="t" style="left:47.40px;top:266.87px;font-size:7.00px;color:#ececec;letter-spacing:-0.032px;">S1:Roof plate</div>
<svg class="r" style="left:25.40px;top:279.12px;" width="6" height="6" viewBox="0 0 6 6"><path d="M1.800 0.800l2.600 2.200-2.600 2.200z" fill="none" stroke="#4a4a4a" stroke-width="0.600"/></svg>
<svg class="r" style="left:36.00px;top:277.12px;" width="11" height="10" viewBox="0 0 11 10"><path d="M0 5.700l4.700-4.200 4.700 2.400-4.100 4.100z" fill="#f6f6f6"/><path d="M0 5.700l5.300 2.300 4.100-4.100v0.900l-4.100 4.100-5.300-2.300z" fill="#c8c8c8"/><circle cx="7.600" cy="1.600" r="1.900" fill="#1ba1e2"/></svg>
<div class="t" style="left:47.40px;top:277.87px;font-size:7.00px;color:#ececec;letter-spacing:-0.158px;">S1:Rear panel</div>
<svg class="r" style="left:25.40px;top:290.06px;" width="6" height="6" viewBox="0 0 6 6"><path d="M1.800 0.800l2.600 2.200-2.600 2.200z" fill="none" stroke="#4a4a4a" stroke-width="0.600"/></svg>
<svg class="r" style="left:36.00px;top:288.06px;" width="11" height="10" viewBox="0 0 11 10"><path d="M0.500 4.500l3.500-2.700h5v4.500l-3.700 2.900h-4.800z" fill="#f6f6f6"/><path d="M0.500 4.500h4.800v4.700M5.300 4.500l3.700-2.700M2.900 4.500v4.700M0.500 6.800h4.800" fill="none" stroke="#777" stroke-width="0.500"/><circle cx="7.600" cy="1.900" r="1.900" fill="#1ba1e2"/></svg>
<div class="t" style="left:47.40px;top:288.87px;font-size:7.00px;color:#ececec;letter-spacing:0.035px;">S1:Frame profile vertical right back</div>
<svg class="r" style="left:25.40px;top:301.00px;" width="6" height="6" viewBox="0 0 6 6"><path d="M1.800 0.800l2.600 2.200-2.600 2.200z" fill="none" stroke="#4a4a4a" stroke-width="0.600"/></svg>
<svg class="r" style="left:36.00px;top:299.00px;" width="11" height="10" viewBox="0 0 11 10"><path d="M0.500 4.500l3.500-2.700h5v4.500l-3.700 2.900h-4.800z" fill="#f6f6f6"/><path d="M0.500 4.500h4.800v4.700M5.300 4.500l3.700-2.700M2.900 4.500v4.700M0.500 6.800h4.800" fill="none" stroke="#777" stroke-width="0.500"/><circle cx="7.600" cy="1.900" r="1.900" fill="#1ba1e2"/></svg>
<div class="t" style="left:47.40px;top:299.87px;font-size:7.00px;color:#ececec;letter-spacing:0.034px;">S1:Frame profile horizontal cover</div>
<svg class="r" style="left:25.40px;top:311.94px;" width="6" height="6" viewBox="0 0 6 6"><path d="M1.800 0.800l2.600 2.200-2.600 2.200z" fill="none" stroke="#4a4a4a" stroke-width="0.600"/></svg>
<svg class="r" style="left:36.00px;top:309.94px;" width="11" height="10" viewBox="0 0 11 10"><path d="M0.500 4.500l3.500-2.700h5v4.500l-3.700 2.900h-4.800z" fill="#f6f6f6"/><path d="M0.500 4.500h4.800v4.700M5.300 4.500l3.700-2.700M2.900 4.500v4.700M0.500 6.800h4.800" fill="none" stroke="#777" stroke-width="0.500"/><circle cx="7.600" cy="1.900" r="1.900" fill="#1ba1e2"/></svg>
<div class="t" style="left:47.40px;top:309.87px;font-size:7.00px;color:#ececec;letter-spacing:0.018px;">S1:Frame profile vertical left back</div>
<svg class="r" style="left:25.40px;top:322.88px;" width="6" height="6" viewBox="0 0 6 6"><path d="M1.800 0.800l2.600 2.200-2.600 2.200z" fill="none" stroke="#4a4a4a" stroke-width="0.600"/></svg>
<svg class="r" style="left:36.00px;top:320.88px;" width="11" height="10" viewBox="0 0 11 10"><path d="M0.500 4.500l3.500-2.700h5v4.500l-3.700 2.900h-4.800z" fill="#f6f6f6"/><path d="M0.500 4.500h4.800v4.700M5.300 4.500l3.700-2.700M2.900 4.500v4.700M0.500 6.800h4.800" fill="none" stroke="#777" stroke-width="0.500"/><circle cx="7.600" cy="1.900" r="1.900" fill="#1ba1e2"/></svg>
<div class="t" style="left:47.40px;top:320.87px;font-size:7.00px;color:#ececec;letter-spacing:0.059px;">S1:Frame profile vertical left front</div>
<svg class="r" style="left:25.40px;top:333.82px;" width="6" height="6" viewBox="0 0 6 6"><path d="M1.800 0.800l2.600 2.200-2.600 2.200z" fill="none" stroke="#4a4a4a" stroke-width="0.600"/></svg>
<svg class="r" style="left:36.00px;top:331.82px;" width="11" height="10" viewBox="0 0 11 10"><path d="M0.500 4.500l3.500-2.700h5v4.500l-3.700 2.900h-4.800z" fill="#f6f6f6"/><path d="M0.500 4.500h4.800v4.700M5.300 4.500l3.700-2.700M2.900 4.500v4.700M0.500 6.800h4.800" fill="none" stroke="#777" stroke-width="0.500"/><circle cx="7.600" cy="1.900" r="1.900" fill="#1ba1e2"/></svg>
<div class="t" style="left:47.40px;top:331.87px;font-size:7.00px;color:#ececec;letter-spacing:0.071px;">S1:Frame profile vertical right front</div>
<svg class="r" style="left:25.40px;top:344.76px;" width="6" height="6" viewBox="0 0 6 6"><path d="M1.800 0.800l2.600 2.200-2.600 2.200z" fill="none" stroke="#4a4a4a" stroke-width="0.600"/></svg>
<svg class="r" style="left:36.00px;top:342.76px;" width="11" height="10" viewBox="0 0 11 10"><path d="M0.500 4.500l3.500-2.700h5v4.500l-3.700 2.900h-4.800z" fill="#f6f6f6"/><path d="M0.500 4.500h4.800v4.700M5.300 4.500l3.700-2.700M2.900 4.500v4.700M0.500 6.800h4.800" fill="none" stroke="#777" stroke-width="0.500"/><circle cx="7.600" cy="1.900" r="1.900" fill="#1ba1e2"/></svg>
<div class="t" style="left:47.40px;top:342.87px;font-size:7.00px;color:#ececec;letter-spacing:0.079px;">S1:Frame profile horizontal floor</div>
<svg class="r" style="left:25.40px;top:355.70px;" width="6" height="6" viewBox="0 0 6 6"><path d="M1.800 0.800l2.600 2.200-2.600 2.200z" fill="none" stroke="#4a4a4a" stroke-width="0.600"/></svg>
<svg class="r" style="left:36.00px;top:353.70px;" width="11" height="10" viewBox="0 0 11 10"><path d="M0.800 1.200h5v2.500h-2.300v5.300h-2.700z" fill="#f6f6f6"/><circle cx="6.500" cy="4" r="2.100" fill="#1ba1e2"/></svg>
<div class="t" style="left:47.40px;top:353.87px;font-size:7.00px;color:#ececec;letter-spacing:-0.340px;">S1:Chassis</div>
<svg class="r" style="left:25.40px;top:366.64px;" width="6" height="6" viewBox="0 0 6 6"><path d="M1.800 0.800l2.600 2.200-2.600 2.200z" fill="none" stroke="#4a4a4a" stroke-width="0.600"/></svg>
<svg class="r" style="left:36.00px;top:364.64px;" width="11" height="10" viewBox="0 0 11 10"><path d="M0.800 1.200h5v2.500h-2.300v5.300h-2.700z" fill="#f6f6f6"/><circle cx="6.500" cy="4" r="2.100" fill="#1ba1e2"/></svg>
<div class="t" style="left:47.40px;top:364.87px;font-size:7.00px;color:#ececec;letter-spacing:-0.340px;">S1:Chassis</div>
</div></div>
<div class="r" style="left:0.00px;top:372.00px;width:21.50px;height:11.50px;background:#424242;"></div>
<div class="t" style="left:3.50px;top:373.87px;font-size:7.00px;color:#f0f0f0;letter-spacing:0.092px;">Tree</div>
<div class="t" style="left:24.80px;top:373.87px;font-size:7.00px;color:#e0e0e0;letter-spacing:0.027px;">List</div>
<div class="r" style="left:0.00px;top:384.00px;width:189.00px;height:2.30px;background:#262626;"></div>
<div class="t" style="left:1.00px;top:387.87px;font-size:7.00px;color:#e6e6e6;letter-spacing:-0.100px;">Graphical preview - [EES]_Industry_Sample_Sta...</div>
<svg class="r" style="left:156.00px;top:387.00px;" width="32" height="11" viewBox="0 0 32 11"><path d="M2.800 4h4.800l-2.400 2.800z" fill="#ddd"/><g fill="none" stroke="#ddd" stroke-width="0.800"><path d="M14.300 2.200h2.400v3.500h-2.400zM13.300 5.800h4.400M15.500 5.800v3"/></g><path d="M24 2.800l4.600 4.800M28.600 2.800l-4.600 4.800" stroke="#e8e8e8" stroke-width="0.900"/></svg>
<div class="r" style="left:0.00px;top:398.00px;width:186.70px;height:163.00px;background:#ffffff;"></div>
<div class="t" style="left:194.50px;top:98.70px;font-size:7.50px;color:#1ba1e2;font-weight:bold;">2</div>
<svg class="r" style="left:204.00px;top:99.50px;" width="8" height="8" viewBox="0 0 8 8"><path d="M1.500 1.500l4.600 4.600M6.100 1.500l-4.600 4.600" stroke="#e8e8e8" stroke-width="0.900"/></svg>
<div class="r" style="left:190.00px;top:108.50px;width:23.00px;height:2.20px;background:#1078b8;"></div>
<svg class="r" style="left:1012.00px;top:100.00px;" width="8" height="6" viewBox="0 0 8 6"><path d="M1.500 1.500h5l-2.500 3z" fill="#999"/></svg>
<div class="r" style="left:190.30px;top:112.00px;width:653.50px;height:433.70px;background:linear-gradient(180deg,#fefefe 0%,#f1f1f1 20%,#e3e3e3 42%,#d4d4d4 66%,#bcbcbc 100%);"></div>
<svg class="r" style="left:0.00px;top:0.00px;pointer-events:none;" width="1024" height="576" viewBox="0 0 1024 576"><rect x="407.4" y="120.5" width="219.5" height="412.9" fill="#969696"/><path d="M407.80 120.50V533.40M412.70 120.50V533.40M417.60 120.50V533.40M422.50 120.50V533.40M427.40 120.50V533.40M432.30 120.50V533.40M437.20 120.50V533.40M442.10 120.50V533.40M447.00 120.50V533.40M451.90 120.50V533.40M456.80 120.50V533.40M461.70 120.50V533.40M466.60 120.50V533.40M471.50 120.50V533.40M476.40 120.50V533.40M481.30 120.50V533.40M486.20 120.50V533.40M491.10 120.50V533.40M496.00 120.50V533.40M500.90 120.50V533.40M505.80 120.50V533.40M510.70 120.50V533.40M515.60 120.50V533.40M520.50 120.50V533.40M525.40 120.50V533.40M530.30 120.50V533.40M535.20 120.50V533.40M540.10 120.50V533.40M545.00 120.50V533.40M549.90 120.50V533.40M554.80 120.50V533.40M559.70 120.50V533.40M564.60 120.50V533.40M569.50 120.50V533.40M574.40 120.50V533.40M579.30 120.50V533.40M584.20 120.50V533.40M589.10 120.50V533.40M594.00 120.50V533.40M598.90 120.50V533.40M603.80 120.50V533.40M608.70 120.50V533.40M613.60 120.50V533.40M618.50 120.50V533.40M623.40 120.50V533.40M407.40 124.50H626.90M407.40 129.36H626.90M407.40 134.21H626.90M407.40 139.07H626.90M407.40 143.92H626.90M407.40 148.78H626.90M407.40 153.64H626.90M407.40 158.49H626.90M407.40 163.35H626.90M407.40 168.20H626.90M407.40 173.06H626.90M407.40 177.92H626.90M407.40 182.77H626.90M407.40 187.63H626.90M407.40 192.48H626.90M407.40 197.34H626.90M407.40 202.20H626.90M407.40 207.05H626.90M407.40 211.91H626.90M407.40 216.76H626.90M407.40 221.62H626.90M407.40 226.48H626.90M407.40 231.33H626.90M407.40 236.19H626.90M407.40 241.04H626.90M407.40 245.90H626.90M407.40 250.76H626.90M407.40 255.61H626.90M407.40 260.47H626.90M407.40 265.32H626.90M407.40 270.18H626.90M407.40 275.04H626.90M407.40 279.89H626.90M407.40 284.75H626.90M407.40 289.60H626.90M407.40 294.46H626.90M407.40 299.32H626.90M407.40 304.17H626.90M407.40 309.03H626.90M407.40 313.88H626.90M407.40 318.74H626.90M407.40 323.60H626.90M407.40 328.45H626.90M407.40 333.31H626.90M407.40 338.16H626.90M407.40 343.02H626.90M407.40 347.88H626.90M407.40 352.73H626.90M407.40 357.59H626.90M407.40 362.44H626.90M407.40 367.30H626.90M407.40 372.16H626.90M407.40 377.01H626.90M407.40 381.87H626.90M407.40 386.72H626.90M407.40 391.58H626.90M407.40 396.44H626.90M407.40 401.29H626.90M407.40 406.15H626.90M407.40 411.00H626.90M407.40 415.86H626.90M407.40 420.72H626.90M407.40 425.57H626.90M407.40 430.43H626.90M407.40 435.28H626.90M407.40 440.14H626.90M407.40 445.00H626.90M407.40 449.85H626.90M407.40 454.71H626.90M407.40 459.56H626.90M407.40 464.42H626.90M407.40 469.28H626.90M407.40 474.13H626.90M407.40 478.99H626.90M407.40 483.84H626.90M407.40 488.70H626.90M407.40 493.56H626.90M407.40 498.41H626.90M407.40 503.27H626.90M407.40 508.12H626.90M407.40 512.98H626.90M407.40 517.84H626.90M407.40 522.69H626.90M407.40 527.55H626.90M407.40 532.40H626.90" stroke="#484848" stroke-width="0.700" fill="none"/><rect x="407.4" y="120.5" width="219.5" height="412.9" fill="none" stroke="#6c6c6c" stroke-width="1"/><rect x="407.7" y="133.6" width="15.1" height="378.2" fill="#0c8c7f" stroke="#0a5f57" stroke-width="0.800"/><rect x="422.8" y="133.6" width="162.5" height="14.4" fill="#0c8c7f" stroke="#0a5f57" stroke-width="0.800"/><rect x="570.6" y="148" width="14.7" height="77.8" fill="#0c8c7f" stroke="#0a5f57" stroke-width="0.800"/><rect x="422.8" y="227" width="188" height="14.2" fill="#0c8c7f" stroke="#0a5f57" stroke-width="0.800"/><rect x="610.8" y="227" width="14.8" height="245.6" fill="#0c8c7f" stroke="#0a5f57" stroke-width="0.800"/><rect x="422.8" y="330" width="188" height="13.4" fill="#0c8c7f" stroke="#0a5f57" stroke-width="0.800"/><rect x="422.8" y="344.8" width="188" height="12.8" fill="#0c8c7f" stroke="#0a5f57" stroke-width="0.800"/><rect x="422.8" y="400.4" width="188" height="13.9" fill="#0c8c7f" stroke="#0a5f57" stroke-width="0.800"/><rect x="422.8" y="457.5" width="188" height="14.8" fill="#0c8c7f" stroke="#8fd14a" stroke-width="0.900"/><rect x="614.8" y="472.6" width="9.8" height="44" fill="#0c8c7f" stroke="#0a5f57" stroke-width="0.800"/><rect x="422.8" y="182.3" width="107.9" height="8.7" fill="#5e2c06"/><rect x="422.8" y="183.7" width="107.6" height="6" fill="#f5820b"/><rect x="422.8" y="374.8" width="188" height="8.4" fill="#5e2c06"/><rect x="422.8" y="376.2" width="187.7" height="5.7" fill="#f5820b"/><rect x="422.8" y="431.9" width="188" height="8.5" fill="#5e2c06"/><rect x="422.8" y="433.3" width="187.7" height="5.8" fill="#f5820b"/><rect x="422.8" y="496.2" width="171.4" height="8.5" fill="#5e2c06"/><rect x="422.8" y="497.6" width="171.1" height="5.8" fill="#f5820b"/><text x="503.8" y="143.1" font-size="6.600" font-family="Liberation Sans, sans-serif" fill="#1c1cc8" text-anchor="middle">43</text><text x="577.3" y="189.1" font-size="6.600" font-family="Liberation Sans, sans-serif" fill="#1c1cc8" text-anchor="middle" transform="rotate(90 577.3 187)">46</text><text x="516.5" y="236.1" font-size="6.600" font-family="Liberation Sans, sans-serif" fill="#1c1cc8" text-anchor="middle">45</text><text x="476.5" y="188.9" font-size="6.600" font-family="Liberation Sans, sans-serif" fill="#1c1cc8" text-anchor="middle">52</text><text x="415.5" y="326.1" font-size="6.600" font-family="Liberation Sans, sans-serif" fill="#1c1cc8" text-anchor="middle" transform="rotate(90 415.5 324)">42</text><text x="618" y="351.6" font-size="6.600" font-family="Liberation Sans, sans-serif" fill="#1c1cc8" text-anchor="middle" transform="rotate(90 618 349.5)">44</text><text x="516.8" y="339.1" font-size="6.600" font-family="Liberation Sans, sans-serif" fill="#1c1cc8" text-anchor="middle">48</text><text x="516.8" y="353.1" font-size="6.600" font-family="Liberation Sans, sans-serif" fill="#1c1cc8" text-anchor="middle">49</text><text x="516.8" y="381.4" font-size="6.600" font-family="Liberation Sans, sans-serif" fill="#1c1cc8" text-anchor="middle">53</text><text x="516.8" y="409.6" font-size="6.600" font-family="Liberation Sans, sans-serif" fill="#1c1cc8" text-anchor="middle">50</text><text x="516.8" y="438.6" font-size="6.600" font-family="Liberation Sans, sans-serif" fill="#1c1cc8" text-anchor="middle">54</text><text x="516.8" y="467.1" font-size="6.600" font-family="Liberation Sans, sans-serif" fill="#1c1cc8" text-anchor="middle">47</text><text x="508" y="502.9" font-size="6.600" font-family="Liberation Sans, sans-serif" fill="#1c1cc8" text-anchor="middle">55</text><text x="619.5" y="496.6" font-size="6.600" font-family="Liberation Sans, sans-serif" fill="#1c1cc8" text-anchor="middle" transform="rotate(90 619.5 494.5)">51</text><rect x="406.3" y="132.1" width="3" height="3" fill="none" stroke="#3fe03f" stroke-width="0.700"/><rect x="421.3" y="132.1" width="3" height="3" fill="none" stroke="#3fe03f" stroke-width="0.700"/><rect x="583.8" y="132.1" width="3" height="3" fill="none" stroke="#3fe03f" stroke-width="0.700"/><rect x="624.1" y="225.5" width="3" height="3" fill="none" stroke="#3fe03f" stroke-width="0.700"/><rect x="421.3" y="328.5" width="3" height="3" fill="none" stroke="#3fe03f" stroke-width="0.700"/><rect x="421.3" y="396.5" width="3" height="3" fill="none" stroke="#3fe03f" stroke-width="0.700"/><rect x="624.1" y="471.1" width="3" height="3" fill="none" stroke="#3fe03f" stroke-width="0.700"/><rect x="421.3" y="510.3" width="3" height="3" fill="none" stroke="#3fe03f" stroke-width="0.700"/><rect x="620.5" y="515.1" width="3" height="3" fill="none" stroke="#3fe03f" stroke-width="0.700"/><circle cx="408" cy="120.8" r="1" fill="none" stroke="#2020e0" stroke-width="0.600"/><circle cx="517" cy="120.8" r="1" fill="none" stroke="#2020e0" stroke-width="0.600"/><circle cx="626.5" cy="120.8" r="1" fill="none" stroke="#2020e0" stroke-width="0.600"/><circle cx="408" cy="327.5" r="1" fill="none" stroke="#2020e0" stroke-width="0.600"/><circle cx="517" cy="327.5" r="1" fill="none" stroke="#2020e0" stroke-width="0.600"/><circle cx="626" cy="327.5" r="1" fill="none" stroke="#2020e0" stroke-width="0.600"/><circle cx="517" cy="533.5" r="1" fill="none" stroke="#2020e0" stroke-width="0.600"/><circle cx="626.5" cy="533.5" r="1" fill="none" stroke="#2020e0" stroke-width="0.600"/><path d="M400.500 115h6.500M407.800 113v6.500M410.500 114.500v4M407.500 118.800h8" stroke="#0a0a0a" stroke-width="1.500" fill="none" stroke-linecap="round"/><circle cx="411.300" cy="126" r="1.800" fill="#0a0a0a"/><rect x="413.500" y="130" width="5.500" height="3" rx="1.500" fill="#d8d8d8" stroke="#555" stroke-width="0.500"/><path d="M633.500 114.500h-6M626.800 113v6.500M623.300 115v4M618.500 118.800h8.500" stroke="#0a0a0a" stroke-width="1.500" fill="none" stroke-linecap="round"/><circle cx="623" cy="126" r="1.800" fill="#0a0a0a"/><rect x="615" y="130.500" width="6" height="3" rx="1.500" fill="#d8d8d8" stroke="#555" stroke-width="0.500"/><circle cx="621.300" cy="138" r="0.800" fill="#333"/><path d="M398 535.800h9M402.500 534.500v3.500M407 536.500h8" stroke="#0a0a0a" stroke-width="1.400" fill="none" stroke-linecap="round"/><path d="M405.300 537.500c0.300 3 0.300 5 0.500 7.500h1.500c0.500-3 1.500-5.500 3.500-7.500" fill="#d4d4d4" stroke="#777" stroke-width="0.500"/><circle cx="411.500" cy="528" r="1.900" fill="#1a1a1a" stroke="#555" stroke-width="0.500"/><rect x="413" y="520.500" width="6.500" height="3.800" rx="1.900" fill="#b8b8b8" stroke="#555" stroke-width="0.500"/><circle cx="413.500" cy="516.300" r="1" fill="none" stroke="#444" stroke-width="0.500"/><path d="M408.500 533v-9" stroke="#20d020" stroke-width="1"/><path d="M407 525l1.500-3.500 1.500 3.500z" fill="#20d020"/><path d="M409 533.600h9" stroke="#e02020" stroke-width="1"/><path d="M417 532.400l3.200 1.200-3.200 1.200z" fill="#e02020"/><rect x="407" y="532.200" width="2.800" height="2.800" fill="#1010e0"/><path d="M636 535.800h-9M631.500 534.500v3.500M627 536.500h-8" stroke="#0a0a0a" stroke-width="1.400" fill="none" stroke-linecap="round"/><path d="M629 537.500c-0.300 3-0.300 5-0.500 7.500h-1.500c-0.500-3-1.500-5.500-3.500-7.500" fill="#d4d4d4" stroke="#777" stroke-width="0.500"/><circle cx="622.500" cy="528" r="1.900" fill="#1a1a1a" stroke="#555" stroke-width="0.500"/><rect x="615" y="520.500" width="6.500" height="3.800" rx="1.900" fill="#b8b8b8" stroke="#555" stroke-width="0.500"/><rect x="532.700" y="291.200" width="14" height="6.500" fill="#eba25a" stroke="#b86a1a" stroke-width="0.500"/><path d="M536 294.500h10" stroke="#9a5a20" stroke-width="0.600"/><circle cx="535" cy="294.500" r="1.300" fill="none" stroke="#d02020" stroke-width="0.600"/><rect x="542" y="299.200" width="231.300" height="41.200" fill="#747474" fill-opacity="0.700"/><path d="M536.800 294.800v11l2.500-2.300 1.800 4 1.700-0.800-1.800-3.900h3.500z" fill="#d81e3c" stroke="#f4d0d0" stroke-width="0.500"/><path d="M223.300 523v-17" stroke="#1414e6" stroke-width="1.300"/><path d="M221.200 508.500l2.100-7.500 2.100 7.500z" fill="#1414e6"/><path d="M224 523.700h16" stroke="#e81414" stroke-width="1.300"/><path d="M238.500 521.700l7.500 2-7.500 2z" fill="#e81414"/><circle cx="223.200" cy="523.800" r="1.600" fill="#14c814"/><rect x="778.200" y="139.900" width="38.300" height="38.200" fill="#ebebeb"/><rect x="782.600" y="144.200" width="29.500" height="29.700" fill="#7a9a78"/><rect x="778.2" y="139.9" width="4.100" height="4.100" fill="#575757"/><rect x="812.4" y="139.9" width="4.100" height="4.100" fill="#575757"/><rect x="778.2" y="174" width="4.100" height="4.100" fill="#575757"/><rect x="812.4" y="174" width="4.100" height="4.100" fill="#575757"/><g fill="#c2c2c2"><path d="M793 134.800h8.700l-4.350 4.700z"/><path d="M793 183.400h8.700l-4.350-4.700z"/><path d="M773 154.800v8.400l4.900-4.200z"/><path d="M822 154.800v8.400l-4.900-4.200z"/></g><g fill="#fbfbfb" stroke="#bcbcbc" stroke-width="0.700" stroke-linejoin="round"><path d="M809.500 122.500l4-5.300 0.800 2.300c4.500-1.300 9.500-1.200 14.500 0.800l-2 5c-3.700-1.500-7.500-1.700-11.300-0.700l0.700 2.300z"/><path d="M833 145.800l-3.300-5.600 2.300-0.200c0.700-3.800 0.500-7.500-0.800-11.500l4.800-1.500c1.700 4.500 2 9 0.800 13.500l2.400-0.200z"/></g><path d="M828.700 190.300l6.600-9.500 6.600 9.500h-1.400v6.200h-3.600v-5.500h-3.200v5.500h-3.600v-6.200z" fill="#ffffff" stroke="#e6e6e6" stroke-width="0.900" stroke-linejoin="round"/></svg>
<div class="t" style="left:543.60px;top:301.87px;font-size:7.00px;color:transparent;letter-spacing:0.107px;background:linear-gradient(90deg,#b9b9b9 0,#b9b9b9 83.3px,#e8e8e8 83.3px);-webkit-background-clip:text;background-clip:text;">Starting point of mounting rail (Absolute)</div>
<div class="t" style="left:542.90px;top:315.87px;font-size:7.00px;color:#b9b9b9;letter-spacing:-0.072px;">Point entry: X Y Z</div>
<div class="t" style="left:544.90px;top:326.87px;font-size:7.00px;color:transparent;letter-spacing:0.032px;background:linear-gradient(90deg,#b9b9b9 0,#b9b9b9 82.0px,#e8e8e8 82.0px);-webkit-background-clip:text;background-clip:text;">520.00 mm 980.00 mm 0.00 mm</div>
<svg class="r" style="left:13.00px;top:398.90px;overflow:hidden;" width="160.60" height="160.89" viewBox="0 0 557 558" preserveAspectRatio="none"><defs><radialGradient id="rb1" cx="0.150" cy="0.450" r="0.850"><stop offset="0" stop-color="#60607f"/><stop offset="0.350" stop-color="#3e3e58"/><stop offset="0.700" stop-color="#1c1c2a"/><stop offset="1" stop-color="#06060a"/></radialGradient><linearGradient id="rf1" x1="0" y1="0" x2="0" y2="1"><stop offset="0" stop-color="#000" stop-opacity="0"/><stop offset="0.550" stop-color="#000" stop-opacity="0"/><stop offset="0.850" stop-color="#000" stop-opacity="0.900"/><stop offset="1" stop-color="#000" stop-opacity="1"/></linearGradient><linearGradient id="rw1" x1="0" y1="0" x2="0.200" y2="1"><stop offset="0" stop-color="#b4c0c4"/><stop offset="0.500" stop-color="#c9d2d6"/><stop offset="1" stop-color="#a9b5ba"/></linearGradient></defs><rect width="557" height="558" fill="url(#rb1)"/><rect width="557" height="558" fill="url(#rf1)"/><g transform="translate(-45,-10)"><path d="M150 165L602 70V96L160 194z" fill="#e4ecf0"/><path d="M160 194L602 96V112L168 212z" fill="#56665c"/><path d="M100 210L168 200L602 106V312L112 428z" fill="url(#rw1)"/><path d="M100 210L160 194L168 212L112 224z" fill="#8a989a"/><path d="M112 428L602 312V324L162 442z" fill="#46564e"/><path d="M112 428L162 442L166 472L118 436z" fill="#9aa6aa"/><path d="M162 442L602 324V352L166 472z" fill="#dfe7eb"/><path d="M98 292L152 288L156 332L100 346z" fill="#3a3a52"/><rect x="-27" y="-23" width="54" height="46" rx="12" fill="#3c3c58" stroke="#8a969c" stroke-width="3" transform="translate(210 297) rotate(-13) skewX(-6)"/><rect x="-27" y="-23" width="54" height="46" rx="12" fill="#3c3c58" stroke="#8a969c" stroke-width="3" transform="translate(290 275) rotate(-13) skewX(-6)"/><rect x="-27" y="-23" width="54" height="46" rx="12" fill="#3c3c58" stroke="#8a969c" stroke-width="3" transform="translate(368 255) rotate(-13) skewX(-6)"/><rect x="-27" y="-23" width="54" height="46" rx="12" fill="#3c3c58" stroke="#8a969c" stroke-width="3" transform="translate(445 237) rotate(-13) skewX(-6)"/><rect x="-27" y="-23" width="54" height="46" rx="12" fill="#3c3c58" stroke="#8a969c" stroke-width="3" transform="translate(520 220) rotate(-13) skewX(-6)"/><rect x="-27" y="-23" width="54" height="46" rx="12" fill="#3c3c58" stroke="#8a969c" stroke-width="3" transform="translate(592 204) rotate(-13) skewX(-6)"/></g></svg>
<div class="r" style="left:843.80px;top:111.70px;width:180.20px;height:434.20px;background:#262626;"></div>
<div class="r" style="left:846.00px;top:112.00px;width:178.00px;height:8.30px;background:#323232;"></div>
<div class="t" style="left:846.80px;top:111.87px;font-size:7.00px;color:#e6e6e6;letter-spacing:-0.054px;">Insert center</div>
<svg class="r" style="left:1002.00px;top:112.00px;" width="22" height="10" viewBox="0 0 22 10"><path d="M2.800 3.500h4.800l-2.400 2.800z" fill="#ddd"/><g fill="none" stroke="#ddd" stroke-width="0.800"><path d="M15.300 1.500h2.400v3.500h-2.400zM14.300 5.100h4.400M16.500 5.100v3"/></g></svg>
<div class="r" style="left:846.00px;top:120.60px;width:178.00px;height:15.60px;background:#2c2c2c;"></div>
<div class="r" style="left:859.80px;top:121.30px;width:147.00px;height:14.40px;background:#2e2e2e;border:1px solid #3c3c3c;"></div>
<div class="r" style="left:1008.30px;top:121.30px;width:14.70px;height:14.40px;background:#2e2e2e;border:1px solid #383838;"></div>
<div class="t" style="left:864.00px;top:124.87px;font-size:7.00px;color:#8c8c8c;letter-spacing:-0.154px;">Find</div>
<svg class="r" style="left:847.00px;top:123.50px;" width="11" height="11" viewBox="0 0 11 11"><g fill="none" stroke="#ddd" stroke-width="0.800"><rect x="1" y="1.500" width="6.500" height="7.500"/><path d="M1 3.500h6.500M3.300 3.500v5.500M5.300 3.500v2"/></g><circle cx="7.300" cy="7.300" r="1.700" fill="#2c2c2c" stroke="#1ba1e2" stroke-width="0.800"/><path d="M8.500 8.600l1.500 1.500" stroke="#1ba1e2" stroke-width="0.900"/></svg>
<svg class="r" style="left:995.50px;top:123.50px;" width="11" height="11" viewBox="0 0 11 11"><circle cx="6.200" cy="4.400" r="2.900" fill="none" stroke="#1b86c8" stroke-width="1"/><path d="M4.200 6.600l-3.300 3" stroke="#1b86c8" stroke-width="1.100"/></svg>
<div class="t" style="left:1013.09px;top:125.05px;font-size:6.50px;color:#b0b0b0;">...</div>
<div class="r" style="left:846.00px;top:143.50px;width:14.00px;height:15.00px;background:#2e2e2e;border:1px solid #3c3c3c;"></div>
<div class="r" style="left:861.80px;top:143.50px;width:14.20px;height:15.00px;background:#2e2e2e;border:1px solid #3c3c3c;"></div>
<div class="r" style="left:877.60px;top:143.50px;width:145.40px;height:15.00px;background:#2e2e2e;border:1px solid #3c3c3c;"></div>
<svg class="r" style="left:848.00px;top:146.30px;" width="10" height="10" viewBox="0 0 10 10"><path d="M1 5.200l4-3.700 4 3.700M2.300 4.500v4.200h5.400v-4.200" fill="none" stroke="#e8e8e8" stroke-width="0.900"/><rect x="4.200" y="5.800" width="1.600" height="2.900" fill="#e8e8e8"/></svg>
<svg class="r" style="left:864.20px;top:147.30px;" width="9" height="9" viewBox="0 0 9 9"><path d="M1.500 4.300h6M4 1.800l-2.500 2.500 2.500 2.500" fill="none" stroke="#e8e8e8" stroke-width="0.900"/></svg>
<div class="t" style="left:881.00px;top:146.87px;font-size:7.00px;color:#e6e6e6;letter-spacing:0.082px;">Home</div>
<div class="t" style="left:914.70px;top:146.87px;font-size:7.00px;color:#e6e6e6;letter-spacing:-0.321px;">Tags</div>
<div class="t" style="left:943.00px;top:146.87px;font-size:7.00px;color:#e6e6e6;letter-spacing:-0.039px;">Ducts &amp; Rails</div>
<svg class="r" style="left:904.70px;top:149.30px;" width="4" height="5" viewBox="0 0 4 5"><path d="M1 0.500l2 2-2 2z" fill="#eee"/></svg>
<svg class="r" style="left:933.80px;top:149.30px;" width="4" height="5" viewBox="0 0 4 5"><path d="M1 0.500l2 2-2 2z" fill="#eee"/></svg>
<svg class="r" style="left:989.30px;top:149.30px;" width="4" height="5" viewBox="0 0 4 5"><path d="M1 0.500l2 2-2 2z" fill="#eee"/></svg>
<div class="r" style="left:845.50px;top:161.00px;width:178.50px;height:302.00px;background:#2d2d2d;"></div>
<div class="r" style="left:845.50px;top:463.00px;width:178.50px;height:2.00px;background:#222222;"></div>
<div class="r" style="left:845.50px;top:465.00px;width:178.50px;height:2.40px;background:#2d2d2d;"></div>
<div class="r" style="left:850.00px;top:166.00px;width:83.40px;height:128.30px;background:#303030;border:1px solid #4a4a4a;"></div>
<div class="r" style="left:851.30px;top:167.30px;width:80.80px;height:98.40px;background:#ffffff;"></div>
<div class="t" style="left:852.20px;top:266.87px;font-size:7.00px;color:#ececec;letter-spacing:-0.154px;">RIT.8800752</div>
<div class="r" style="left:935.80px;top:166.00px;width:83.60px;height:128.30px;background:#303030;border:1px solid #4a4a4a;"></div>
<div class="r" style="left:937.10px;top:167.30px;width:81.00px;height:98.40px;background:#ffffff;"></div>
<div class="t" style="left:938.00px;top:266.87px;font-size:7.00px;color:#ececec;letter-spacing:-0.154px;">RIT.8800753</div>
<div class="r" style="left:850.00px;top:296.00px;width:83.40px;height:128.50px;background:#303030;border:1px solid #4a4a4a;"></div>
<div class="r" style="left:851.30px;top:297.30px;width:80.80px;height:98.50px;background:#ffffff;"></div>
<div class="t" style="left:852.20px;top:396.87px;font-size:7.00px;color:#ececec;letter-spacing:-0.154px;">RIT.8800751</div>
<div class="r" style="left:935.80px;top:296.00px;width:84.00px;height:128.50px;background:#303030;border:1px solid #8e8e8e;"></div>
<div class="r" style="left:937.10px;top:297.30px;width:81.40px;height:98.50px;background:#ffffff;"></div>
<div class="t" style="left:938.00px;top:396.87px;font-size:7.00px;color:#ececec;letter-spacing:-0.154px;">RIT.2317000</div>
<svg class="r" style="left:851.30px;top:193.30px;overflow:hidden;" width="81.40" height="62.00" viewBox="0 0 335 255" preserveAspectRatio="none"><defs><radialGradient id="db2" cx="0.020" cy="0.400" r="0.850"><stop offset="0" stop-color="#6a6a8c"/><stop offset="0.300" stop-color="#3a3a54"/><stop offset="0.700" stop-color="#12121a"/><stop offset="1" stop-color="#020203"/></radialGradient><pattern id="dp2" width="9" height="300" patternUnits="userSpaceOnUse" patternTransform="skewY(-16)"><rect width="9" height="300" fill="#a4a8a4"/><rect x="0" y="0" width="3.600" height="300" fill="#5e6460"/></pattern></defs><rect width="335" height="255" fill="url(#db2)"/><rect y="150" width="335" height="105" fill="#000" fill-opacity="0.550"/><g transform="translate(-30,-137)"><path d="M70 205L300 137H365V152L105 224z" fill="#cdd1cd"/><path d="M105 224L365 152V205L105 286z" fill="url(#dp2)"/><path d="M105 224L365 152V160L105 233z" fill="#c9cdc9"/><path d="M70 205L105 224V286L70 266z" fill="#8e9490"/><path d="M76 216L100 229V278L76 264z" fill="#5e6460"/><path d="M105 286L365 205V215L105 296z" fill="#2a2c2c" fill-opacity="0.800"/><path d="M200 266L365 212V244L236 284z" fill="#d3d7d3"/><path d="M236 284L365 244V330L236 358z" fill="url(#dp2)"/><path d="M236 284L365 244V252L236 293z" fill="#cdd1cd"/><path d="M200 266L236 284V358L200 338z" fill="#a2a8a4"/><path d="M206 278L231 291V349L206 335z" fill="#666c68"/><path d="M200 338L236 358L365 330V345L236 372L200 350z" fill="#3a3c3c" fill-opacity="0.700"/></g></svg>
<svg class="r" style="left:937.10px;top:193.30px;overflow:hidden;" width="81.40" height="62.00" viewBox="0 0 335 255" preserveAspectRatio="none"><defs><radialGradient id="db3" cx="0.020" cy="0.400" r="0.850"><stop offset="0" stop-color="#6a6a8c"/><stop offset="0.300" stop-color="#3a3a54"/><stop offset="0.700" stop-color="#12121a"/><stop offset="1" stop-color="#020203"/></radialGradient><pattern id="dp3" width="9" height="300" patternUnits="userSpaceOnUse" patternTransform="skewY(-16)"><rect width="9" height="300" fill="#a4a8a4"/><rect x="0" y="0" width="3.600" height="300" fill="#5e6460"/></pattern></defs><rect width="335" height="255" fill="url(#db3)"/><rect y="150" width="335" height="105" fill="#000" fill-opacity="0.550"/><g transform="translate(-28,-137)"><path d="M70 205L300 137H365V152L105 224z" fill="#cdd1cd"/><path d="M105 224L365 152V205L105 286z" fill="url(#dp3)"/><path d="M105 224L365 152V160L105 233z" fill="#c9cdc9"/><path d="M70 205L105 224V286L70 266z" fill="#8e9490"/><path d="M76 216L100 229V278L76 264z" fill="#5e6460"/><path d="M105 286L365 205V215L105 296z" fill="#2a2c2c" fill-opacity="0.800"/><path d="M200 266L365 212V244L236 284z" fill="#d3d7d3"/><path d="M236 284L365 244V330L236 358z" fill="url(#dp3)"/><path d="M236 284L365 244V252L236 293z" fill="#cdd1cd"/><path d="M200 266L236 284V358L200 338z" fill="#a2a8a4"/><path d="M206 278L231 291V349L206 335z" fill="#666c68"/><path d="M200 338L236 358L365 330V345L236 372L200 350z" fill="#3a3c3c" fill-opacity="0.700"/></g></svg>
<svg class="r" style="left:851.30px;top:323.80px;overflow:hidden;" width="81.40" height="63.00" viewBox="0 0 335 255" preserveAspectRatio="none"><defs><radialGradient id="db4" cx="0.020" cy="0.400" r="0.850"><stop offset="0" stop-color="#6a6a8c"/><stop offset="0.300" stop-color="#3a3a54"/><stop offset="0.700" stop-color="#12121a"/><stop offset="1" stop-color="#020203"/></radialGradient><pattern id="dp4" width="9" height="300" patternUnits="userSpaceOnUse" patternTransform="skewY(-16)"><rect width="9" height="300" fill="#a4a8a4"/><rect x="0" y="0" width="3.600" height="300" fill="#5e6460"/></pattern></defs><rect width="335" height="255" fill="url(#db4)"/><rect y="150" width="335" height="105" fill="#000" fill-opacity="0.550"/><g transform="translate(-30,-137)"><path d="M70 205L300 137H365V152L105 224z" fill="#cdd1cd"/><path d="M105 224L365 152V205L105 286z" fill="url(#dp4)"/><path d="M105 224L365 152V160L105 233z" fill="#c9cdc9"/><path d="M70 205L105 224V286L70 266z" fill="#8e9490"/><path d="M76 216L100 229V278L76 264z" fill="#5e6460"/><path d="M105 286L365 205V215L105 296z" fill="#2a2c2c" fill-opacity="0.800"/><path d="M200 266L365 212V244L236 284z" fill="#d3d7d3"/><path d="M236 284L365 244V330L236 358z" fill="url(#dp4)"/><path d="M236 284L365 244V252L236 293z" fill="#cdd1cd"/><path d="M200 266L236 284V358L200 338z" fill="#a2a8a4"/><path d="M206 278L231 291V349L206 335z" fill="#666c68"/><path d="M200 338L236 358L365 330V345L236 372L200 350z" fill="#3a3c3c" fill-opacity="0.700"/></g></svg>
<svg class="r" style="left:937.10px;top:313.90px;overflow:hidden;" width="81.40" height="81.55" viewBox="0 0 557 558" preserveAspectRatio="none"><defs><radialGradient id="rb5" cx="0.150" cy="0.450" r="0.850"><stop offset="0" stop-color="#60607f"/><stop offset="0.350" stop-color="#3e3e58"/><stop offset="0.700" stop-color="#1c1c2a"/><stop offset="1" stop-color="#06060a"/></radialGradient><linearGradient id="rf5" x1="0" y1="0" x2="0" y2="1"><stop offset="0" stop-color="#000" stop-opacity="0"/><stop offset="0.550" stop-color="#000" stop-opacity="0"/><stop offset="0.850" stop-color="#000" stop-opacity="0.900"/><stop offset="1" stop-color="#000" stop-opacity="1"/></linearGradient><linearGradient id="rw5" x1="0" y1="0" x2="0.200" y2="1"><stop offset="0" stop-color="#b4c0c4"/><stop offset="0.500" stop-color="#c9d2d6"/><stop offset="1" stop-color="#a9b5ba"/></linearGradient></defs><rect width="557" height="558" fill="url(#rb5)"/><rect width="557" height="558" fill="url(#rf5)"/><g transform="translate(-45,-10)"><path d="M150 165L602 70V96L160 194z" fill="#e4ecf0"/><path d="M160 194L602 96V112L168 212z" fill="#56665c"/><path d="M100 210L168 200L602 106V312L112 428z" fill="url(#rw5)"/><path d="M100 210L160 194L168 212L112 224z" fill="#8a989a"/><path d="M112 428L602 312V324L162 442z" fill="#46564e"/><path d="M112 428L162 442L166 472L118 436z" fill="#9aa6aa"/><path d="M162 442L602 324V352L166 472z" fill="#dfe7eb"/><path d="M98 292L152 288L156 332L100 346z" fill="#3a3a52"/><rect x="-27" y="-23" width="54" height="46" rx="12" fill="#3c3c58" stroke="#8a969c" stroke-width="3" transform="translate(210 297) rotate(-13) skewX(-6)"/><rect x="-27" y="-23" width="54" height="46" rx="12" fill="#3c3c58" stroke="#8a969c" stroke-width="3" transform="translate(290 275) rotate(-13) skewX(-6)"/><rect x="-27" y="-23" width="54" height="46" rx="12" fill="#3c3c58" stroke="#8a969c" stroke-width="3" transform="translate(368 255) rotate(-13) skewX(-6)"/><rect x="-27" y="-23" width="54" height="46" rx="12" fill="#3c3c58" stroke="#8a969c" stroke-width="3" transform="translate(445 237) rotate(-13) skewX(-6)"/><rect x="-27" y="-23" width="54" height="46" rx="12" fill="#3c3c58" stroke="#8a969c" stroke-width="3" transform="translate(520 220) rotate(-13) skewX(-6)"/><rect x="-27" y="-23" width="54" height="46" rx="12" fill="#3c3c58" stroke="#8a969c" stroke-width="3" transform="translate(592 204) rotate(-13) skewX(-6)"/></g></svg>
<svg class="r" style="left:851.00px;top:167.50px;" width="30" height="17" viewBox="0 0 30 17"><path d="M7.300 1.700l1.750 4.100 4.450 0.350-3.400 2.900 1.050 4.350-3.850-2.350-3.850 2.350 1.050-4.350-3.400-2.900 4.450-0.350z" fill="none" stroke="#1ba1e2" stroke-width="1.050"/><path d="M18.500 3.400l4.550-3.100 4.550 3.100v11.400l-4.550-2.800-4.550 2.800z" fill="#1ba1e2"/><circle cx="23.050" cy="4.300" r="1.300" fill="#fff"/><circle cx="23.400" cy="4.300" r="0.500" fill="#1ba1e2"/></svg>
<svg class="r" style="left:937.00px;top:167.50px;" width="30" height="17" viewBox="0 0 30 17"><path d="M7.300 1.700l1.750 4.100 4.450 0.350-3.400 2.900 1.050 4.350-3.850-2.350-3.850 2.350 1.050-4.350-3.400-2.900 4.450-0.350z" fill="none" stroke="#1ba1e2" stroke-width="1.050"/><path d="M18.500 3.400l4.550-3.100 4.550 3.100v11.400l-4.550-2.800-4.550 2.800z" fill="#1ba1e2"/><circle cx="23.050" cy="4.300" r="1.300" fill="#fff"/><circle cx="23.400" cy="4.300" r="0.500" fill="#1ba1e2"/></svg>
<svg class="r" style="left:851.00px;top:297.50px;" width="30" height="17" viewBox="0 0 30 17"><path d="M7.300 1.700l1.750 4.100 4.450 0.350-3.400 2.900 1.050 4.350-3.850-2.350-3.850 2.350 1.050-4.350-3.400-2.900 4.450-0.350z" fill="none" stroke="#1ba1e2" stroke-width="1.050"/><path d="M18.500 3.400l4.550-3.100 4.550 3.100v11.400l-4.550-2.800-4.550 2.800z" fill="#1ba1e2"/><circle cx="23.050" cy="4.300" r="1.300" fill="#fff"/><circle cx="23.400" cy="4.300" r="0.500" fill="#1ba1e2"/></svg>
<svg class="r" style="left:937.00px;top:297.50px;" width="30" height="17" viewBox="0 0 30 17"><path d="M7.300 1.700l1.750 4.100 4.450 0.350-3.400 2.900 1.050 4.350-3.850-2.350-3.850 2.350 1.050-4.350-3.400-2.900 4.450-0.350z" fill="none" stroke="#1ba1e2" stroke-width="1.050"/><path d="M18.500 3.400l4.550-3.100 4.550 3.100v11.400l-4.550-2.800-4.550 2.800z" fill="#1ba1e2"/><circle cx="23.050" cy="4.300" r="1.300" fill="#fff"/><circle cx="23.400" cy="4.300" r="0.500" fill="#1ba1e2"/></svg>
<div class="r" style="left:846.00px;top:472.40px;width:175.70px;height:13.10px;background:#3a3a3a;"></div>
<div class="r" style="left:846.00px;top:485.50px;width:175.70px;height:38.50px;background:#1c1c1c;"></div>
<div class="r" style="left:846.00px;top:535.80px;width:178.00px;height:10.00px;background:#2d2d2d;"></div>
<div class="r" style="left:884.50px;top:472.40px;width:0.80px;height:51.50px;background:#2c2c2c;"></div>
<div class="r" style="left:923.50px;top:472.40px;width:0.80px;height:51.50px;background:#2c2c2c;"></div>
<div class="r" style="left:971.40px;top:472.40px;width:0.80px;height:51.50px;background:#2c2c2c;"></div>
<div class="t" style="left:849.50px;top:474.87px;font-size:7.00px;color:#e0e0e0;letter-spacing:-0.090px;">Part nu...</div>
<div class="t" style="left:888.00px;top:474.87px;font-size:7.00px;color:#e0e0e0;letter-spacing:-0.124px;">Type nu...</div>
<div class="t" style="left:927.00px;top:474.87px;font-size:7.00px;color:#e0e0e0;letter-spacing:-0.140px;">Part: Desig...</div>
<div class="t" style="left:974.80px;top:474.87px;font-size:7.00px;color:#e0e0e0;letter-spacing:-0.190px;">Technical ch...</div>
<div class="r" style="left:846.00px;top:498.90px;width:175.70px;height:0.80px;background:#2e2e2e;"></div>
<div class="t" style="left:848.60px;top:487.87px;font-size:7.00px;color:#ececec;letter-spacing:-0.168px;">RIT.8800...</div>
<div class="t" style="left:887.00px;top:487.87px;font-size:7.00px;color:#ececec;letter-spacing:-0.244px;">TS.88007...</div>
<div class="t" style="left:925.80px;top:487.87px;font-size:7.00px;color:#ececec;letter-spacing:0.004px;">Cable duct</div>
<div class="t" style="left:973.20px;top:487.87px;font-size:7.00px;color:#ececec;letter-spacing:-0.022px;">60mm x 80m...</div>
<div class="r" style="left:846.00px;top:511.35px;width:175.70px;height:0.80px;background:#2e2e2e;"></div>
<div class="t" style="left:848.60px;top:500.87px;font-size:7.00px;color:#ececec;letter-spacing:-0.168px;">RIT.8800...</div>
<div class="t" style="left:887.00px;top:500.87px;font-size:7.00px;color:#ececec;letter-spacing:-0.244px;">TS.88007...</div>
<div class="t" style="left:925.80px;top:500.87px;font-size:7.00px;color:#ececec;letter-spacing:0.004px;">Cable duct</div>
<div class="t" style="left:973.20px;top:500.87px;font-size:7.00px;color:#ececec;letter-spacing:-0.022px;">80mm x 80m...</div>
<div class="r" style="left:846.00px;top:523.80px;width:175.70px;height:0.80px;background:#2e2e2e;"></div>
<div class="t" style="left:848.60px;top:512.87px;font-size:7.00px;color:#ececec;letter-spacing:-0.168px;">RIT.8800...</div>
<div class="t" style="left:887.00px;top:512.87px;font-size:7.00px;color:#ececec;letter-spacing:-0.244px;">TS.88007...</div>
<div class="t" style="left:925.80px;top:512.87px;font-size:7.00px;color:#ececec;letter-spacing:0.004px;">Cable duct</div>
<div class="t" style="left:973.20px;top:512.87px;font-size:7.00px;color:#ececec;letter-spacing:-0.022px;">40mm x 80m...</div>
<div class="r" style="left:846.30px;top:524.30px;width:175.40px;height:11.30px;background:#2c2c2c;border:1px solid #8a8a8a;"></div>
<div class="t" style="left:848.60px;top:525.87px;font-size:7.00px;color:#ececec;letter-spacing:-0.168px;">RIT.2317...</div>
<div class="t" style="left:887.00px;top:525.87px;font-size:7.00px;color:#ececec;letter-spacing:-0.244px;">SZ.23170...</div>
<div class="t" style="left:925.80px;top:525.87px;font-size:7.00px;color:#ececec;letter-spacing:-0.005px;">Support rail ...</div>
<div class="r" style="left:187.00px;top:545.80px;width:837.00px;height:14.80px;background:#4c4c4c;"></div>
<div class="r" style="left:0.00px;top:560.30px;width:1024.00px;height:15.70px;background:#555555;"></div>
<div class="r" style="left:187.00px;top:545.50px;width:837.00px;height:0.80px;background:#3a3a3a;"></div>
<div class="r" style="left:187.00px;top:559.70px;width:837.00px;height:0.90px;background:#404040;"></div>
<div class="t" style="left:193.00px;top:548.87px;font-size:7.00px;color:#ececec;letter-spacing:-0.025px;">X: 520.00 mm Y: 980.00 mm Z: 0.00 mm</div>
<div class="t" style="left:322.50px;top:548.87px;font-size:7.00px;color:#ececec;letter-spacing:0.176px;">Starting point of mounting rail</div>
<div class="t" style="left:3.00px;top:563.87px;font-size:7.00px;color:#ececec;letter-spacing:-0.001px;">Insert</div>
<div class="r" style="left:785.90px;top:547.40px;width:38.40px;height:10.80px;background:#3a3a3a;"></div>
<div class="r" style="left:860.30px;top:547.40px;width:20.50px;height:10.80px;background:#3d3d3d;"></div>
<svg class="r" style="left:786.00px;top:546.00px;" width="100" height="14" viewBox="0 0 100 14"><rect x="1.600" y="8.100" width="8.200" height="2.900" rx="0.800" fill="none" stroke="#e4e4e4" stroke-width="0.900"/><path d="M3.100 7.100l4.600-3.900" stroke="#1ba1e2" stroke-width="1.200"/><path d="M17 9.300v-3.500a2.400 2.400 0 0 1 4.800 0v3.500" fill="none" stroke="#f0f0f0" stroke-width="1.700"/><circle cx="16.200" cy="10.400" r="0.900" fill="#1ba1e2"/><path d="M29.100 9.300v-3.500a2.300 2.300 0 0 1 4.600 0v3.500" fill="none" stroke="#f0f0f0" stroke-width="1.700"/><path d="M35.800 4.500v1.200M35.800 6.500v1.200M35.800 8.500v1.200M30.500 11h1.200M32.500 11h1.200M34.500 11h1.200" stroke="#ccc" stroke-width="0.800"/><ellipse cx="52" cy="5.700" rx="4" ry="2.300" fill="none" stroke="#e0e0e0" stroke-width="0.900"/><circle cx="52" cy="5.700" r="1.300" fill="none" stroke="#e0e0e0" stroke-width="0.700"/><path d="M48.500 8c0.500 2 6.500 2 7 0" fill="none" stroke="#1ba1e2" stroke-width="0.900"/><path d="M51 9.300h2l-1 1.400z" fill="#1ba1e2"/><path d="M61 5.900l1.400 1.400 1.400-1.400" fill="none" stroke="#888" stroke-width="0.700"/><rect x="76" y="2.5" width="1.400" height="1.400" fill="#e4e4e4"/><rect x="76" y="5.1" width="1.400" height="1.400" fill="#e4e4e4"/><rect x="76" y="7.7" width="1.400" height="1.400" fill="#e4e4e4"/><rect x="78.6" y="2.5" width="1.400" height="1.400" fill="#e4e4e4"/><rect x="78.6" y="5.1" width="1.400" height="1.400" fill="#e4e4e4"/><rect x="78.6" y="7.7" width="1.400" height="1.400" fill="#e4e4e4"/><rect x="81.2" y="2.5" width="1.400" height="1.400" fill="#e4e4e4"/><rect x="81.2" y="5.1" width="1.400" height="1.400" fill="#e4e4e4"/><rect x="81.2" y="7.7" width="1.400" height="1.400" fill="#e4e4e4"/><path d="M89.800 5.900l1.400 1.400 1.400-1.400" fill="none" stroke="#888" stroke-width="0.700"/></svg>
<div class="t" style="left:892.00px;top:548.87px;font-size:7.00px;color:#ececec;letter-spacing:-0.040px;">Grid C: 20.00 mm</div>
<div class="t" style="left:951.70px;top:548.87px;font-size:7.00px;color:#ececec;letter-spacing:-0.071px;">Graphic 1:1</div>
<svg class="r" style="left:998.00px;top:548.00px;" width="12" height="12" viewBox="0 0 12 12"><circle cx="4.800" cy="4.800" r="3" fill="none" stroke="#e0e0e0" stroke-width="0.900"/><path d="M7 7l2.500 2.500" stroke="#e0e0e0" stroke-width="1"/><path d="M2.500 9.500v-2M2.500 9.500h2.500M6 9.500v-1.500" stroke="#1ba1e2" stroke-width="0.700" fill="none"/></svg>
<svg class="r" style="left:1010.50px;top:548.00px;" width="12" height="12" viewBox="0 0 12 12"><circle cx="4.800" cy="4.800" r="3" fill="none" stroke="#e0e0e0" stroke-width="0.900"/><path d="M7 7l2.500 2.500" stroke="#e0e0e0" stroke-width="1"/><path d="M2 9.800h5" stroke="#1ba1e2" stroke-width="0.900" stroke-dasharray="1 0.500"/></svg>
<div class="t" style="left:977.90px;top:563.87px;font-size:7.00px;color:#ececec;letter-spacing:-0.380px;">en_US</div>
<div class="t" style="left:1002.00px;top:564.87px;font-size:7.00px;color:#ececec;">*</div>
<svg class="r" style="left:1011.50px;top:562.50px;" width="11" height="11" viewBox="0 0 11 11"><path d="M5.500 1l4.800 8.800h-9.600z" fill="#f5821f"/><path d="M5.500 4v3" stroke="#fff" stroke-width="1"/><circle cx="5.500" cy="8.300" r="0.600" fill="#fff"/></svg>
</div></body></html>
